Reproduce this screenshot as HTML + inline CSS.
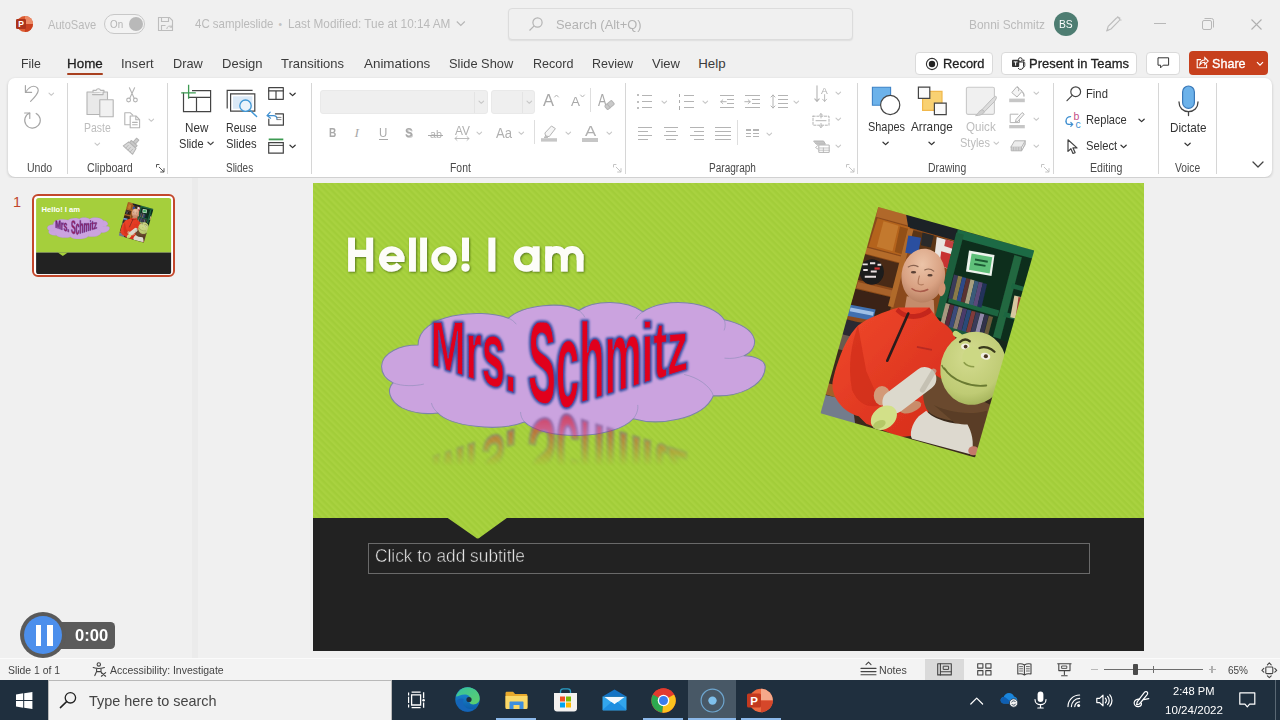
<!DOCTYPE html>
<html>
<head>
<meta charset="utf-8">
<title>PowerPoint</title>
<style>
*{box-sizing:border-box;margin:0;padding:0}
html,body{width:1280px;height:720px;overflow:hidden;background:#f0f0f0;font-family:"Liberation Sans",sans-serif;}
#root{position:relative;width:1280px;height:720px;overflow:hidden;background:#f0f0f0;}
.abs{position:absolute}
svg{position:absolute;overflow:visible}
.t{position:absolute;white-space:nowrap;line-height:1;}
#titlebar{position:absolute;left:0;top:0;width:1280px;height:47px;background:#f0f0f0;}
#tabs{position:absolute;left:0;top:47px;width:1280px;height:32px;background:#f0f0f0;}
#ribbon{position:absolute;left:8px;top:78px;width:1264px;height:99px;background:#fff;border-radius:7px;box-shadow:0 1px 3px rgba(0,0,0,.2);}
.vd{position:absolute;width:1px;background:#dcdcdc;}
#work{position:absolute;left:0;top:178px;width:1280px;height:480px;background:#f0f0f0;}
#leftpane{position:absolute;left:192px;top:178px;width:6px;height:480px;background:#ebebeb;}
#slide{position:absolute;left:313px;top:183px;width:831px;height:468px;background:#a5cd39;overflow:hidden;}
#status{position:absolute;left:0;top:658px;width:1280px;height:22px;background:#f3f3f3;border-top:1px solid #fbfbfb;}
#taskbar{position:absolute;left:0;top:680px;width:1280px;height:40px;background:#1f2f3e;}

</style>
</head>
<body>
<div id="root">
<div id="titlebar"></div>
<svg style="left:14px;top:14px" width="20" height="20" viewBox="0 0 20 20">
 <circle cx="11" cy="10" r="8" fill="#dc5a30"/>
 <path d="M11 2a8 8 0 0 1 8 8h-8z" fill="#ec8a66"/>
 <path d="M11 10h8a8 8 0 0 1-8 8z" fill="#c9401f"/>
 <rect x="2" y="5" width="10" height="10" rx="1.2" fill="#ad331a"/>
 <text x="7" y="13.2" font-family="Liberation Sans" font-weight="bold" font-size="8.5" fill="#fff" text-anchor="middle">P</text>
</svg>
<div class="t" style="left:48.40px;top:18.67px;font-size:12.2px;color:#bababa;transform:scaleX(0.9111);transform-origin:0 0;">AutoSave</div>
<div class="abs" style="left:104px;top:14px;width:41px;height:20px;border:1px solid #c8c8c8;border-radius:10px;background:#f3f3f3"></div>
<div class="t" style="left:109.70px;top:18.77px;font-size:11.5px;color:#b5b5b5;transform:scaleX(0.8539);transform-origin:0 0;">On</div>
<div class="abs" style="left:129.3px;top:16.8px;width:14px;height:14px;border-radius:7px;background:#b9b9b9"></div>
<svg style="left:157px;top:16px" width="17" height="16" viewBox="0 0 17 16" fill="none" stroke="#bdbdbd" stroke-width="1.1">
 <path d="M1.5 1.5h11l3 3v10h-14z"/><path d="M4.5 1.5v4h7v-4"/><path d="M4.5 14.5v-5h4"/><path d="M9.8 13a3 3 0 0 1 5-2.2m.3-2v2.3h-2.3" stroke-width="1"/>
</svg>
<div class="t" style="left:194.50px;top:18.47px;font-size:12.2px;color:#bababa;transform:scaleX(0.9412);transform-origin:0 0;">4C sampleslide</div>
<div class="t" style="left:278.60px;top:20.34px;font-size:10px;color:#c2c2c2;">•</div>
<div class="t" style="left:287.50px;top:18.47px;font-size:12.2px;color:#bababa;transform:scaleX(0.9662);transform-origin:0 0;">Last Modified: Tue at 10:14 AM</div>
<svg style="left:455.5px;top:20px" width="10" height="8" viewBox="0 0 10 8" fill="none" stroke="#b5b5b5" stroke-width="1.1"><path d="M.8 1.5l4 4 4-4"/></svg>
<div class="abs" style="left:508px;top:8px;width:345px;height:32px;border:1px solid #dcdcdc;border-radius:4px;background:#f0f0f0;box-shadow:0 1px 1.5px rgba(0,0,0,.08)"></div>
<svg style="left:528px;top:16px" width="16" height="16" viewBox="0 0 16 16" fill="none" stroke="#b3b3b3" stroke-width="1.2"><circle cx="9.5" cy="6.5" r="4.6"/><path d="M6.2 9.8L1.5 14.5"/></svg>
<div class="t" style="left:556.00px;top:18.00px;font-size:13px;color:#b3b3b3;transform:scaleX(0.9903);transform-origin:0 0;">Search (Alt+Q)</div>
<div class="t" style="left:969.00px;top:18.67px;font-size:12.2px;color:#bababa;transform:scaleX(0.9746);transform-origin:0 0;">Bonni Schmitz</div>
<div class="abs" style="left:1054px;top:12px;width:24.4px;height:24.4px;border-radius:12.2px;background:#4e7d72"></div>
<div class="t" style="left:1059.30px;top:19.11px;font-size:10.5px;color:#fff;transform:scaleX(0.9781);transform-origin:0 0;">BS</div>
<svg style="left:1104px;top:15px" width="19" height="18" viewBox="0 0 19 18" fill="none" stroke="#bdbdbd" stroke-width="1.1">
 <path d="M3 15.5l1.2-4.2L12.5 3a1.9 1.9 0 0 1 2.7 2.7L7 14z"/><path d="M13.5 1.2l1 1.6 1.8.3M16.5 5.5l.8-.8"/><path d="M2.5 16l2-1"/>
</svg>
<div class="abs" style="left:1154px;top:23px;width:12px;height:1px;background:#b8b8b8"></div>
<svg style="left:1202px;top:18px" width="12" height="12" viewBox="0 0 12 12" fill="none" stroke="#b8b8b8" stroke-width="1"><rect x=".5" y="2.5" width="9" height="9" rx="1.5"/><path d="M2.5 .5h7a2 2 0 0 1 2 2v7"/></svg>
<svg style="left:1250.5px;top:18.5px" width="11" height="11" viewBox="0 0 11 11" fill="none" stroke="#b0b0b0" stroke-width="1.1"><path d="M.5 .5l10 10M10.5 .5l-10 10"/></svg>
<div id="tabs"></div>
<div class="t" style="left:21.30px;top:56.74px;font-size:13.3px;color:#3b3b3b;transform:scaleX(0.9286);transform-origin:0 0;">File</div>
<div class="t" style="left:67.00px;top:56.74px;font-size:13.3px;color:#1e1e1e;transform:scaleX(1.0091);transform-origin:0 0;-webkit-text-stroke:.3px #1e1e1e;">Home</div>
<div class="t" style="left:121.20px;top:56.74px;font-size:13.3px;color:#3b3b3b;transform:scaleX(0.9801);transform-origin:0 0;">Insert</div>
<div class="t" style="left:173.20px;top:56.74px;font-size:13.3px;color:#3b3b3b;transform:scaleX(0.9602);transform-origin:0 0;">Draw</div>
<div class="t" style="left:222.00px;top:56.74px;font-size:13.3px;color:#3b3b3b;transform:scaleX(0.9783);transform-origin:0 0;">Design</div>
<div class="t" style="left:281.20px;top:56.74px;font-size:13.3px;color:#3b3b3b;transform:scaleX(0.9760);transform-origin:0 0;">Transitions</div>
<div class="t" style="left:363.70px;top:56.74px;font-size:13.3px;color:#3b3b3b;transform:scaleX(1.0077);transform-origin:0 0;">Animations</div>
<div class="t" style="left:448.80px;top:56.74px;font-size:13.3px;color:#3b3b3b;transform:scaleX(0.9648);transform-origin:0 0;">Slide Show</div>
<div class="t" style="left:532.50px;top:56.74px;font-size:13.3px;color:#3b3b3b;transform:scaleX(0.9446);transform-origin:0 0;">Record</div>
<div class="t" style="left:592.00px;top:56.74px;font-size:13.3px;color:#3b3b3b;transform:scaleX(0.9402);transform-origin:0 0;">Review</div>
<div class="t" style="left:652.00px;top:56.74px;font-size:13.3px;color:#3b3b3b;transform:scaleX(0.9794);transform-origin:0 0;">View</div>
<div class="t" style="left:698.20px;top:56.74px;font-size:13.3px;color:#3b3b3b;">Help</div>
<div class="abs" style="left:67px;top:72.7px;width:36px;height:2.6px;border-radius:1.3px;background:#a8401f"></div>
<div class="abs" style="left:915.4px;top:52px;width:77.2px;height:22.6px;border:1px solid #dadada;border-radius:4px;background:#fff"></div>
<svg style="left:925px;top:56.5px" width="14" height="14" viewBox="0 0 14 14"><circle cx="7" cy="7" r="5.6" fill="none" stroke="#333" stroke-width="1.1"/><circle cx="7" cy="7" r="3.2" fill="#222"/></svg>
<div class="t" style="left:942.50px;top:56.74px;font-size:13.3px;color:#222;transform:scaleX(0.9679);transform-origin:0 0;-webkit-text-stroke:.3px #222;">Record</div>
<div class="abs" style="left:1001.4px;top:52px;width:135.4px;height:22.6px;border:1px solid #dadada;border-radius:4px;background:#fff"></div>
<svg style="left:1011.5px;top:56.5px" width="13" height="13" viewBox="0 0 13 13">
 <circle cx="8.3" cy="2.6" r="1.9" fill="none" stroke="#333" stroke-width="1"/><circle cx="11.6" cy="3.6" r="1.1" fill="#444"/>
 <path d="M6 5h5.5v4.5a3 3 0 0 1-5.5 1.6" fill="none" stroke="#333" stroke-width="1"/><path d="M11.5 5.6h1.3v3.2a1.6 1.6 0 0 1-1.3 1.5" fill="none" stroke="#444" stroke-width=".9"/>
 <rect x="0" y="2.8" width="7.2" height="7.2" rx=".9" fill="#333"/><path d="M1.7 4.9h3.8M3.6 4.9v3.7" stroke="#fff" stroke-width="1"/>
</svg>
<div class="t" style="left:1028.60px;top:56.74px;font-size:13.3px;color:#222;transform:scaleX(0.9755);transform-origin:0 0;-webkit-text-stroke:.3px #222;">Present in Teams</div>
<div class="abs" style="left:1145.8px;top:52px;width:34px;height:22.6px;border:1px solid #dadada;border-radius:4px;background:#fff"></div>
<svg style="left:1156.5px;top:57px" width="13" height="12" viewBox="0 0 13 12" fill="none" stroke="#333" stroke-width="1"><path d="M1 .8h10.6v7.4H6.2L3.6 10.8V8.2H1z"/></svg>
<div class="abs" style="left:1188.6px;top:50.6px;width:79.6px;height:24px;border-radius:4px;background:#c7401d"></div>
<svg style="left:1195.5px;top:56px" width="13" height="13" viewBox="0 0 13 13" fill="none" stroke="#fff" stroke-width="1.1">
 <path d="M5 3.6H1.2v8.2h9.4V8.4"/><path d="M3.8 8.6c.4-3 2.4-4.6 5-4.6V1.6l3.4 3.5-3.4 3.5V6.3c-2.2 0-3.8.7-5 2.3z"/></svg>
<div class="t" style="left:1212.40px;top:56.74px;font-size:13.3px;color:#fff;transform:scaleX(0.9467);transform-origin:0 0;-webkit-text-stroke:.35px #fff;">Share</div>
<svg style="left:1255.5px;top:60.5px" width="8" height="6" viewBox="0 0 8 6" fill="none" stroke="#fff" stroke-width="1.2"><path d="M1 1.2l3 3 3-3"/></svg>
<div id="ribbon"></div>
<svg style="left:24px;top:85px" width="16" height="17" viewBox="0 0 16 17" fill="none" stroke="#a6a6a6" stroke-width="1.15" stroke-linecap="round" stroke-linejoin="round" ><path d="M1.400 .600v6.800h6.200"/><path d="M1.800 7C4 3.500 7 1.200 9.600 1.200c3 0 4.800 2.200 4.600 4.400-.200 3.400-4.200 7.400-7.600 10.800"/></svg>
<svg style="left:48.10px;top:91.50px" width="6.6" height="6" viewBox="0 0 6.6 6" fill="none" stroke="#c6c6c6" stroke-width="1.1" stroke-linecap="round" stroke-linejoin="round"><path d="M1 1.2l2.3 2.0999999999999996 2.3 -2.0999999999999996"/></svg>
<svg style="left:23.5px;top:111.5px" width="17" height="17" viewBox="0 0 17 17" fill="none" stroke="#a6a6a6" stroke-width="1.15" stroke-linecap="round" stroke-linejoin="round" ><path d="M12.140 1.400A7.800 7.800 0 1 1 5.770 1"/><path d="M.600 1h5.170v5.400"/></svg>
<div class="t" style="left:27.00px;top:161.54px;font-size:12px;color:#4a4a4a;transform:scaleX(0.8784);transform-origin:0 0;">Undo</div>
<div class="vd" style="left:67.3px;top:83px;height:91px;background:#d6d6d6"></div>
<svg style="left:85.5px;top:86.5px" width="28" height="31" viewBox="0 0 28 31" fill="none" stroke="#b4b4b4" stroke-width="1.1" stroke-linecap="round" stroke-linejoin="round" ><path d="M1 5h20.5v22.5H1z" fill="#e9e9e9"/><path d="M7 5V3.4h3.2a2.3 2.3 0 0 1 4.4 0H18V5M6.5 7.6h10.6V5" fill="#f4f4f4"/><path d="M13.8 12.8h13.4v17H13.8z" fill="#f1f1f1"/></svg>
<div class="t" style="left:83.80px;top:122.33px;font-size:12.6px;color:#bdbdbd;transform:scaleX(0.8287);transform-origin:0 0;">Paste</div>
<svg style="left:93.60px;top:141.70px" width="6.6" height="6" viewBox="0 0 6.6 6" fill="none" stroke="#c6c6c6" stroke-width="1.1" stroke-linecap="round" stroke-linejoin="round"><path d="M1 1.2l2.3 2.0999999999999996 2.3 -2.0999999999999996"/></svg>
<svg style="left:126px;top:87px" width="12" height="16" viewBox="0 0 12 16" fill="none" stroke="#b4b4b4" stroke-width="1.1" stroke-linecap="round" stroke-linejoin="round" ><path d="M3.4 .8L8.2 11.2M8.6 .8L3.8 11.2"/><circle cx="2.6" cy="13" r="1.9"/><circle cx="9.4" cy="13" r="1.9"/></svg>
<svg style="left:123.5px;top:111.5px" width="17" height="17" viewBox="0 0 17 17" fill="none" stroke="#b4b4b4" stroke-width="1.1" stroke-linecap="round" stroke-linejoin="round" ><path d="M6 12.8H.8V.8h5.6l2.4 2.4"/><path d="M6.2 4h5.8l3.6 3.6v8.2H6.2z" fill="#fff"/><path d="M11.8 4.2v3.6h3.6M8.6 10.4h4.6M8.6 12.8h4.6"/></svg>
<svg style="left:148.20px;top:117.80px" width="6.6" height="6" viewBox="0 0 6.6 6" fill="none" stroke="#c6c6c6" stroke-width="1.1" stroke-linecap="round" stroke-linejoin="round"><path d="M1 1.2l2.3 2.0999999999999996 2.3 -2.0999999999999996"/></svg>
<svg style="left:124px;top:137px" width="17" height="16" viewBox="0 0 17 16" fill="none" stroke="#b4b4b4" stroke-width="1" stroke-linecap="round" stroke-linejoin="round" ><g transform="rotate(42 8.5 8)"><path d="M7 .2h3v5.2H7z" fill="#cfcfcf"/><path d="M4.6 5.4h7.8v2.8H4.6z" fill="#c8c8c8"/><path d="M3.6 8.2h9.8l1.4 6.6H2.2z" fill="#d9d9d9"/><path d="M5.6 11v3.6M8.5 11v3.6M11.4 11v3.6" stroke-width=".8"/></g></svg>
<div class="t" style="left:86.50px;top:161.54px;font-size:12px;color:#4a4a4a;transform:scaleX(0.8917);transform-origin:0 0;">Clipboard</div>
<svg style="left:155.6px;top:163.5px" width="9" height="9" viewBox="0 0 9 9" fill="none" stroke="#555" stroke-width="1" stroke-linecap="round" stroke-linejoin="round" ><path d="M.5 3V.5H3M3.2 3.2l4.6 4.6M8 4.6V8H4.6"/></svg>
<div class="vd" style="left:167.0px;top:83px;height:91px;background:#d6d6d6"></div>
<svg style="left:180px;top:84px" width="32" height="29" viewBox="0 0 32 29"  fill="none" stroke-width="1.2"><path d="M3.5 8.6V27.6H30.6V6.6H12" stroke="#444"/><path d="M8.2 13.4H30.6M16.5 13.4V27.6" stroke="#444"/><path d="M8.6 .8V14.8M1.2 8.8H15.8" stroke="#3d9b52" stroke-width="1.3"/></svg>
<div class="t" style="left:185.40px;top:121.83px;font-size:12.6px;color:#333;transform:scaleX(0.9244);transform-origin:0 0;">New</div>
<div class="t" style="left:178.80px;top:137.73px;font-size:12.6px;color:#333;transform:scaleX(0.8780);transform-origin:0 0;">Slide</div>
<svg style="left:207.30px;top:141.30px" width="7.2" height="6" viewBox="0 0 7.2 6" fill="none" stroke="#444" stroke-width="1.2" stroke-linecap="round" stroke-linejoin="round"><path d="M1 1.2l2.6 2.4 2.6 -2.4"/></svg>
<svg style="left:226px;top:89px" width="32" height="29" viewBox="0 0 32 29"  fill="none" stroke-width="1.2"><path d="M1.2 19.6V1.4H26.6" stroke="#444"/><path d="M4.6 4.9H28.8V22.2H4.6z" stroke="#444" fill="#fff"/><path d="M7 7.3H26.4V19.8H7z" fill="#dbe9f6" stroke="none"/><circle cx="19.5" cy="16.7" r="5.7" stroke="#3f97d6" fill="#eaf3fb" stroke-width="1.3"/><path d="M23.6 20.8L30.6 27.6" stroke="#3f97d6" stroke-width="1.4" stroke-linecap="round"/></svg>
<div class="t" style="left:225.60px;top:121.83px;font-size:12.6px;color:#333;transform:scaleX(0.8401);transform-origin:0 0;">Reuse</div>
<div class="t" style="left:225.60px;top:137.73px;font-size:12.6px;color:#333;transform:scaleX(0.8917);transform-origin:0 0;">Slides</div>
<svg style="left:268px;top:87px" width="16" height="13" viewBox="0 0 16 13" fill="none" stroke="#444" stroke-width="1.2" stroke-linecap="round" stroke-linejoin="round" ><path d="M.7 .7h14.6v11.6H.7z"/><path d="M.7 3.9h14.6M8 3.9v8.4"/></svg>
<svg style="left:289.40px;top:91.50px" width="7.2" height="6" viewBox="0 0 7.2 6" fill="none" stroke="#333" stroke-width="1.25" stroke-linecap="round" stroke-linejoin="round"><path d="M1 1.2l2.6 2.4 2.6 -2.4"/></svg>
<svg style="left:266px;top:111px" width="19" height="15" viewBox="0 0 19 15"  fill="none" stroke-linecap="round" stroke-linejoin="round"><path d="M9.4 2.8H17.4V14.2H2.8V8.2" stroke="#444" stroke-width="1.2"/><path d="M1 4.6L4.2 1.2M1 4.6l3.6 2.6M1.2 4.6h6.2c2.2 0 3.6 1.6 3.6 3.6" stroke="#3f8fd0" stroke-width="1.2"/><path d="M11 6.4h4M11 8.6h4" stroke="#777" stroke-width=".9"/></svg>
<svg style="left:268px;top:138px" width="16" height="16" viewBox="0 0 16 16"  fill="none"><path d="M.7 1.4h14.6" stroke="#3d9b52" stroke-width="1.8"/><path d="M.7 4.6h14.6v10.6H.7z" stroke="#444" stroke-width="1.2"/><path d="M.7 7.4h14.6" stroke="#444" stroke-width="1"/></svg>
<svg style="left:289.40px;top:143.90px" width="7.2" height="6" viewBox="0 0 7.2 6" fill="none" stroke="#333" stroke-width="1.25" stroke-linecap="round" stroke-linejoin="round"><path d="M1 1.2l2.6 2.4 2.6 -2.4"/></svg>
<div class="t" style="left:225.60px;top:161.54px;font-size:12px;color:#4a4a4a;transform:scaleX(0.8292);transform-origin:0 0;">Slides</div>
<div class="vd" style="left:311.0px;top:83px;height:91px;background:#d6d6d6"></div>
<div class="abs" style="left:320.3px;top:90.4px;width:167.5px;height:23.2px;background:#efefef;border:1px solid #e9e9e9;border-radius:3px"></div>
<div class="vd" style="left:474.4px;top:91.5px;height:21.0px;background:#e4e4e4"></div>
<svg style="left:478.30px;top:99.50px" width="6.6" height="6" viewBox="0 0 6.6 6" fill="none" stroke="#c6c6c6" stroke-width="1.1" stroke-linecap="round" stroke-linejoin="round"><path d="M1 1.2l2.3 2.0999999999999996 2.3 -2.0999999999999996"/></svg>
<div class="abs" style="left:491.2px;top:90.4px;width:44.2px;height:23.2px;background:#efefef;border:1px solid #e9e9e9;border-radius:3px"></div>
<div class="vd" style="left:521.6px;top:91.5px;height:21.0px;background:#e4e4e4"></div>
<svg style="left:525.70px;top:99.50px" width="6.6" height="6" viewBox="0 0 6.6 6" fill="none" stroke="#c6c6c6" stroke-width="1.1" stroke-linecap="round" stroke-linejoin="round"><path d="M1 1.2l2.3 2.0999999999999996 2.3 -2.0999999999999996"/></svg>
<div class="t" style="left:543.20px;top:91.97px;font-size:17.4px;color:#a8a8a8;transform:scaleX(0.9478);transform-origin:0 0;">A</div>
<svg style="left:554.4px;top:93.6px" width="5" height="4" viewBox="0 0 5 4" fill="none" stroke="#b4b4b4" stroke-width="1" stroke-linecap="round" stroke-linejoin="round" ><path d="M.6 3L2.5 1l1.9 2"/></svg>
<div class="t" style="left:570.60px;top:95.36px;font-size:13.4px;color:#a8a8a8;transform:scaleX(1.0070);transform-origin:0 0;">A</div>
<svg style="left:580px;top:93.6px" width="5" height="4" viewBox="0 0 5 4" fill="none" stroke="#b4b4b4" stroke-width="1" stroke-linecap="round" stroke-linejoin="round" ><path d="M.6 1L2.5 3l1.9-2"/></svg>
<div class="vd" style="left:590.2px;top:88px;height:24px;background:#dedede"></div>
<div class="t" style="left:597.80px;top:91.97px;font-size:17.4px;color:#a8a8a8;transform:scaleX(0.7410);transform-origin:0 0;">A</div>
<svg style="left:603.5px;top:100px" width="11" height="10" viewBox="0 0 11 10" fill="none" stroke="#b4b4b4" stroke-width="1" stroke-linecap="round" stroke-linejoin="round" ><g transform="rotate(-40 5.5 5)"><rect x="1" y="2.6" width="9" height="5" rx="1" fill="#c9c9c9"/><path d="M4.4 2.6v5"/></g></svg>
<div class="t" style="left:328.70px;top:126.43px;font-size:13.2px;color:#a9a9a9;font-weight:bold;transform:scaleX(0.7658);transform-origin:0 0;">B</div>
<div class="t" style="left:354.5px;top:126px;font-size:13.4px;font-family:'Liberation Serif',serif;font-style:italic;color:#a9a9a9">I</div>
<div class="t" style="left:379.40px;top:126.53px;font-size:12.6px;color:#a9a9a9;transform:scaleX(0.9122);transform-origin:0 0;">U</div>
<div class="abs" style="left:378.6px;top:139.2px;width:9.8px;height:1px;background:#a9a9a9"></div>
<div class="t" style="left:405.30px;top:126.29px;font-size:13.6px;color:#a9a9a9;font-weight:bold;transform:scaleX(0.8488);transform-origin:0 0;text-shadow:.8px .8px 0 #d0d0d0;">S</div>
<div class="t" style="left:429.80px;top:128.55px;font-size:11.4px;color:#b0b0b0;transform:scaleX(0.9463);transform-origin:0 0;">ab</div>
<div class="abs" style="left:428.2px;top:134.8px;width:15.2px;height:1px;background:#a9a9a9"></div>
<div class="t" style="left:454.60px;top:124.70px;font-size:12.4px;color:#b0b0b0;transform:scaleX(0.9602);transform-origin:0 0;">AV</div>
<svg style="left:454px;top:136px" width="16" height="5" viewBox="0 0 16 5" fill="none" stroke="#b4b4b4" stroke-width="0.9" stroke-linecap="round" stroke-linejoin="round" ><path d="M1 2.5h14M3 .6L1 2.5l2 1.9M13 .6l2 1.9-2 1.9"/></svg>
<svg style="left:476.00px;top:131.20px" width="6.6" height="6" viewBox="0 0 6.6 6" fill="none" stroke="#c6c6c6" stroke-width="1.1" stroke-linecap="round" stroke-linejoin="round"><path d="M1 1.2l2.3 2.0999999999999996 2.3 -2.0999999999999996"/></svg>
<div class="t" style="left:496.40px;top:127.32px;font-size:13.8px;color:#b0b0b0;transform:scaleX(0.9479);transform-origin:0 0;">Aa</div>
<svg style="left:518.00px;top:131.20px" width="6.6" height="6" viewBox="0 0 6.6 6" fill="none" stroke="#c6c6c6" stroke-width="1.1" stroke-linecap="round" stroke-linejoin="round"><path d="M1 1.2l2.3 2.0999999999999996 2.3 -2.0999999999999996"/></svg>
<div class="vd" style="left:534.2px;top:120px;height:24px;background:#dedede"></div>
<svg style="left:541px;top:125px" width="17" height="17" viewBox="0 0 17 17" fill="none" stroke="#b4b4b4" stroke-width="1" stroke-linecap="round" stroke-linejoin="round" ><path d="M10.8 1.2l3.6 2.4-6.2 8-3.6-.6-.6-2.6z" fill="#f6f6f6"/><path d="M4.6 11l-1.4 1.4h3.2z" fill="#cfcfcf"/><rect x="0" y="13.2" width="16" height="3.4" fill="#c6c6c6" stroke="none"/></svg>
<svg style="left:565.10px;top:131.20px" width="6.6" height="6" viewBox="0 0 6.6 6" fill="none" stroke="#c6c6c6" stroke-width="1.1" stroke-linecap="round" stroke-linejoin="round"><path d="M1 1.2l2.3 2.0999999999999996 2.3 -2.0999999999999996"/></svg>
<div class="t" style="left:584.70px;top:124.21px;font-size:14.4px;color:#b0b0b0;transform:scaleX(1.1661);transform-origin:0 0;">A</div>
<div class="abs" style="left:581.8px;top:138.2px;width:16.2px;height:3.4px;background:#c6c6c6"></div>
<svg style="left:605.90px;top:131.20px" width="6.6" height="6" viewBox="0 0 6.6 6" fill="none" stroke="#c6c6c6" stroke-width="1.1" stroke-linecap="round" stroke-linejoin="round"><path d="M1 1.2l2.3 2.0999999999999996 2.3 -2.0999999999999996"/></svg>
<div class="t" style="left:449.60px;top:161.54px;font-size:12px;color:#4a4a4a;transform:scaleX(0.8662);transform-origin:0 0;">Font</div>
<svg style="left:613px;top:163.5px" width="9" height="9" viewBox="0 0 9 9" fill="none" stroke="#c4c4c4" stroke-width="1" stroke-linecap="round" stroke-linejoin="round" ><path d="M.5 3V.5H3M3.2 3.2l4.6 4.6M8 4.6V8H4.6"/></svg>
<div class="vd" style="left:624.6px;top:83px;height:91px;background:#d6d6d6"></div>
<div class="abs" style="left:641.8px;top:94.85px;width:10.7px;height:1.1px;background:#b4b4b4"></div><div class="abs" style="left:641.8px;top:101.05px;width:10.7px;height:1.1px;background:#b4b4b4"></div><div class="abs" style="left:641.8px;top:107.25px;width:10.7px;height:1.1px;background:#b4b4b4"></div>
<div class="abs" style="left:636.6px;top:94.3px;width:2.2px;height:2.2px;border-radius:1.1px;background:#a8a8a8"></div><div class="abs" style="left:636.6px;top:100.5px;width:2.2px;height:2.2px;border-radius:1.1px;background:#a8a8a8"></div><div class="abs" style="left:636.6px;top:106.7px;width:2.2px;height:2.2px;border-radius:1.1px;background:#a8a8a8"></div>
<svg style="left:661.00px;top:99.50px" width="6.6" height="6" viewBox="0 0 6.6 6" fill="none" stroke="#c6c6c6" stroke-width="1.1" stroke-linecap="round" stroke-linejoin="round"><path d="M1 1.2l2.3 2.0999999999999996 2.3 -2.0999999999999996"/></svg>
<div class="abs" style="left:683.6px;top:94.85px;width:10.0px;height:1.1px;background:#b4b4b4"></div><div class="abs" style="left:683.6px;top:101.05px;width:10.0px;height:1.1px;background:#b4b4b4"></div><div class="abs" style="left:683.6px;top:107.25px;width:10.0px;height:1.1px;background:#b4b4b4"></div>
<div class="abs" style="left:679px;top:93.5px;width:1.1px;height:3.8px;background:#ababab"></div>
<div class="abs" style="left:679px;top:99.7px;width:1.1px;height:3.8px;background:#ababab"></div>
<div class="abs" style="left:679px;top:105.9px;width:1.1px;height:3.8px;background:#ababab"></div>
<svg style="left:701.70px;top:99.50px" width="6.6" height="6" viewBox="0 0 6.6 6" fill="none" stroke="#c6c6c6" stroke-width="1.1" stroke-linecap="round" stroke-linejoin="round"><path d="M1 1.2l2.3 2.0999999999999996 2.3 -2.0999999999999996"/></svg>
<div class="abs" style="left:720.0px;top:94.85px;width:14.4px;height:1.1px;background:#b4b4b4"></div><div class="abs" style="left:720.0px;top:107.25px;width:14.4px;height:1.1px;background:#b4b4b4"></div>
<div class="abs" style="left:727.0px;top:99.05px;width:7.4px;height:1.1px;background:#b4b4b4"></div><div class="abs" style="left:727.0px;top:103.15px;width:7.4px;height:1.1px;background:#b4b4b4"></div>
<svg style="left:719.5px;top:99px" width="7" height="6" viewBox="0 0 7 6" fill="none" stroke="#b4b4b4" stroke-width="1" stroke-linecap="round" stroke-linejoin="round" ><path d="M.8 2.7h5.4M2.8 .8L.8 2.7l2 1.9"/></svg>
<div class="abs" style="left:744.6px;top:94.85px;width:15.4px;height:1.1px;background:#b4b4b4"></div><div class="abs" style="left:744.6px;top:107.25px;width:15.4px;height:1.1px;background:#b4b4b4"></div>
<div class="abs" style="left:752.4px;top:99.05px;width:7.6px;height:1.1px;background:#b4b4b4"></div><div class="abs" style="left:752.4px;top:103.15px;width:7.6px;height:1.1px;background:#b4b4b4"></div>
<svg style="left:744.4px;top:99px" width="7" height="6" viewBox="0 0 7 6" fill="none" stroke="#b4b4b4" stroke-width="1" stroke-linecap="round" stroke-linejoin="round" ><path d="M.8 2.7h5.4M4.2 .8l2 1.9-2 1.9"/></svg>
<div class="abs" style="left:778.0px;top:94.85px;width:10.0px;height:1.1px;background:#b4b4b4"></div><div class="abs" style="left:778.0px;top:98.95px;width:10.0px;height:1.1px;background:#b4b4b4"></div><div class="abs" style="left:778.0px;top:103.05px;width:10.0px;height:1.1px;background:#b4b4b4"></div><div class="abs" style="left:778.0px;top:107.25px;width:10.0px;height:1.1px;background:#b4b4b4"></div>
<svg style="left:770.4px;top:94px" width="6" height="15" viewBox="0 0 6 15" fill="none" stroke="#b4b4b4" stroke-width="1" stroke-linecap="round" stroke-linejoin="round" ><path d="M3 1v13M1 3l2-2 2 2M1 12l2 2 2-2"/></svg>
<svg style="left:792.70px;top:99.50px" width="6.6" height="6" viewBox="0 0 6.6 6" fill="none" stroke="#c6c6c6" stroke-width="1.1" stroke-linecap="round" stroke-linejoin="round"><path d="M1 1.2l2.3 2.0999999999999996 2.3 -2.0999999999999996"/></svg>
<svg style="left:814px;top:85px" width="14" height="18" viewBox="0 0 14 18" fill="none" stroke="#b4b4b4" stroke-width="1.1" stroke-linecap="round" stroke-linejoin="round" ><path d="M3 .8v15.6M.8 13.8L3 16.4l2.2-2.6"/><path d="M10.6 9.6v6.8M8.6 14.2l2 2.2 2-2.2" stroke-width=".9"/></svg>
<div class="t" style="left:820.60px;top:85.64px;font-size:9.4px;color:#b0b0b0;transform:scaleX(1.0846);transform-origin:0 0;">A</div>
<svg style="left:834.70px;top:91.10px" width="6.6" height="6" viewBox="0 0 6.6 6" fill="none" stroke="#c6c6c6" stroke-width="1.1" stroke-linecap="round" stroke-linejoin="round"><path d="M1 1.2l2.3 2.0999999999999996 2.3 -2.0999999999999996"/></svg>
<svg style="left:812px;top:112.5px" width="18" height="15" viewBox="0 0 18 15" fill="none" stroke="#b4b4b4" stroke-width="1" stroke-linecap="round" stroke-linejoin="round" ><path d="M1 3.2h16v9H1z" stroke-dasharray="2.2 1.6"/><path d="M4 7.7h10" /><path d="M9 .6v4.4M7.4 2.2L9 .6l1.6 1.6M9 14.6v-4.2M7.4 13l1.6 1.6 1.6-1.6" stroke-width=".9"/></svg>
<svg style="left:834.70px;top:116.90px" width="6.6" height="6" viewBox="0 0 6.6 6" fill="none" stroke="#c6c6c6" stroke-width="1.1" stroke-linecap="round" stroke-linejoin="round"><path d="M1 1.2l2.3 2.0999999999999996 2.3 -2.0999999999999996"/></svg>
<svg style="left:813px;top:139.5px" width="17" height="13" viewBox="0 0 17 13" fill="none" stroke="#b4b4b4" stroke-width="1" stroke-linecap="round" stroke-linejoin="round" ><path d="M1 1h9.6l1.8 3.2H3.6z" fill="#c4c4c4"/><path d="M6.2 5h10v7.4h-10z" fill="#fff"/><path d="M6.2 8h10M6.2 10.2h10M10.4 8v4.4" stroke-width=".8"/><path d="M4.8 5.4L2.6 7.6l2.2 1.4" stroke-width=".9"/></svg>
<svg style="left:834.70px;top:143.50px" width="6.6" height="6" viewBox="0 0 6.6 6" fill="none" stroke="#c6c6c6" stroke-width="1.1" stroke-linecap="round" stroke-linejoin="round"><path d="M1 1.2l2.3 2.0999999999999996 2.3 -2.0999999999999996"/></svg>
<div class="abs" style="left:637.5px;top:126.75px;width:14.7px;height:1.1px;background:#b4b4b4"></div><div class="abs" style="left:637.5px;top:130.95px;width:10.0px;height:1.1px;background:#b4b4b4"></div><div class="abs" style="left:637.5px;top:135.05px;width:14.7px;height:1.1px;background:#b4b4b4"></div><div class="abs" style="left:637.5px;top:139.15px;width:10.0px;height:1.1px;background:#b4b4b4"></div>
<div class="abs" style="left:663.8px;top:126.75px;width:14.6px;height:1.1px;background:#b4b4b4"></div><div class="abs" style="left:666.1px;top:130.95px;width:10.0px;height:1.1px;background:#b4b4b4"></div><div class="abs" style="left:663.8px;top:135.05px;width:14.6px;height:1.1px;background:#b4b4b4"></div><div class="abs" style="left:666.1px;top:139.15px;width:10.0px;height:1.1px;background:#b4b4b4"></div>
<div class="abs" style="left:689.6px;top:126.75px;width:14.6px;height:1.1px;background:#b4b4b4"></div><div class="abs" style="left:694.2px;top:130.95px;width:10.0px;height:1.1px;background:#b4b4b4"></div><div class="abs" style="left:689.6px;top:135.05px;width:14.6px;height:1.1px;background:#b4b4b4"></div><div class="abs" style="left:694.2px;top:139.15px;width:10.0px;height:1.1px;background:#b4b4b4"></div>
<div class="abs" style="left:715.2px;top:126.75px;width:15.8px;height:1.1px;background:#b4b4b4"></div><div class="abs" style="left:715.2px;top:130.95px;width:15.8px;height:1.1px;background:#b4b4b4"></div><div class="abs" style="left:715.2px;top:135.05px;width:15.8px;height:1.1px;background:#b4b4b4"></div><div class="abs" style="left:715.2px;top:139.15px;width:15.8px;height:1.1px;background:#b4b4b4"></div>
<div class="vd" style="left:737.3px;top:120px;height:24.599999999999994px;background:#dedede"></div>
<div class="abs" style="left:746.0px;top:129.45px;width:5.4px;height:1.1px;background:#b4b4b4"></div><div class="abs" style="left:746.0px;top:132.75px;width:5.4px;height:1.1px;background:#b4b4b4"></div><div class="abs" style="left:746.0px;top:136.05px;width:5.4px;height:1.1px;background:#b4b4b4"></div>
<div class="abs" style="left:753.4px;top:129.45px;width:5.4px;height:1.1px;background:#b4b4b4"></div><div class="abs" style="left:753.4px;top:132.75px;width:5.4px;height:1.1px;background:#b4b4b4"></div><div class="abs" style="left:753.4px;top:136.05px;width:5.4px;height:1.1px;background:#b4b4b4"></div>
<svg style="left:766.00px;top:131.90px" width="6.6" height="6" viewBox="0 0 6.6 6" fill="none" stroke="#c6c6c6" stroke-width="1.1" stroke-linecap="round" stroke-linejoin="round"><path d="M1 1.2l2.3 2.0999999999999996 2.3 -2.0999999999999996"/></svg>
<div class="t" style="left:709.30px;top:161.54px;font-size:12px;color:#4a4a4a;transform:scaleX(0.8369);transform-origin:0 0;">Paragraph</div>
<svg style="left:846px;top:163.5px" width="9" height="9" viewBox="0 0 9 9" fill="none" stroke="#c4c4c4" stroke-width="1" stroke-linecap="round" stroke-linejoin="round" ><path d="M.5 3V.5H3M3.2 3.2l4.6 4.6M8 4.6V8H4.6"/></svg>
<div class="vd" style="left:856.6px;top:83px;height:91px;background:#d6d6d6"></div>
<svg style="left:871px;top:86px" width="30" height="30" viewBox="0 0 30 30"  ><path d="M1.4 1.2h18.2v18H1.4z" fill="#6cb2ea" stroke="#3d82c6" stroke-width="1.1"/><circle cx="19.2" cy="19" r="9.6" fill="#fff" stroke="#444" stroke-width="1.2"/></svg>
<div class="t" style="left:867.50px;top:121.33px;font-size:12.6px;color:#333;transform:scaleX(0.8658);transform-origin:0 0;">Shapes</div>
<svg style="left:881.80px;top:141.00px" width="7.2" height="6" viewBox="0 0 7.2 6" fill="none" stroke="#333" stroke-width="1.25" stroke-linecap="round" stroke-linejoin="round"><path d="M1 1.2l2.6 2.4 2.6 -2.4"/></svg>
<svg style="left:917px;top:86px" width="31" height="30" viewBox="0 0 31 30"  ><path d="M5.6 5.4h19.4v19H5.6z" fill="#f9d172" stroke="#f1b84c" stroke-width="1.2"/><path d="M1.4 1.2h11.4v11.2H1.4z" fill="#fafafa" stroke="#444" stroke-width="1.2"/><path d="M17.4 17.2h11.8v11.4H17.4z" fill="#fafafa" stroke="#444" stroke-width="1.2"/></svg>
<div class="t" style="left:911.30px;top:121.33px;font-size:12.6px;color:#333;transform:scaleX(0.9303);transform-origin:0 0;">Arrange</div>
<svg style="left:928.40px;top:141.00px" width="7.2" height="6" viewBox="0 0 7.2 6" fill="none" stroke="#333" stroke-width="1.25" stroke-linecap="round" stroke-linejoin="round"><path d="M1 1.2l2.6 2.4 2.6 -2.4"/></svg>
<svg style="left:965px;top:86px" width="33" height="32" viewBox="0 0 33 32"  ><rect x="1.4" y="1.2" width="28" height="27.2" rx="1.6" fill="#f0f0f0" stroke="#c9c9c9" stroke-width="1.1"/><path d="M31.2 10.6c.8 1-.4 3-2 5.2l-9.6 9.8-2.6-2 9.8-10.4c1.8-1.8 3.6-3.4 4.4-2.6z" fill="#dcdcdc" stroke="#bdbdbd" stroke-width="1"/><path d="M17 23.6l2.6 2c-1.2 2.8-4.600 4-9 4 2.400-1 2.800-4.800 6.400-6z" fill="#cfcfcf" stroke="#bdbdbd" stroke-width="1"/></svg>
<div class="t" style="left:965.50px;top:121.33px;font-size:12.6px;color:#bdbdbd;transform:scaleX(0.9221);transform-origin:0 0;">Quick</div>
<div class="t" style="left:960.00px;top:137.33px;font-size:12.6px;color:#bdbdbd;transform:scaleX(0.8743);transform-origin:0 0;">Styles</div>
<svg style="left:992.90px;top:141.30px" width="6.6" height="6" viewBox="0 0 6.6 6" fill="none" stroke="#c6c6c6" stroke-width="1.1" stroke-linecap="round" stroke-linejoin="round"><path d="M1 1.2l2.3 2.0999999999999996 2.3 -2.0999999999999996"/></svg>
<svg style="left:1009px;top:85.5px" width="17" height="17" viewBox="0 0 17 17" fill="none" stroke="#b4b4b4" stroke-width="1" stroke-linecap="round" stroke-linejoin="round" ><path d="M7.4 1.2L2.800 6.600l5.200 4.400 5-5.600z" fill="#f4f4f4"/><path d="M8.600 .6c1 .4 1.400 2.200 1 4.200"/><path d="M13.600 6.200c1.200 1.400 1.600 2.600 1.400 3.800" stroke-width="1.300"/><rect x=".2" y="12.600" width="15.600" height="3.600" fill="#c6c6c6" stroke="none"/></svg>
<svg style="left:1032.50px;top:91.30px" width="6.6" height="6" viewBox="0 0 6.6 6" fill="none" stroke="#c6c6c6" stroke-width="1.1" stroke-linecap="round" stroke-linejoin="round"><path d="M1 1.2l2.3 2.0999999999999996 2.3 -2.0999999999999996"/></svg>
<svg style="left:1009px;top:111.5px" width="17" height="17" viewBox="0 0 17 17" fill="none" stroke="#b4b4b4" stroke-width="1" stroke-linecap="round" stroke-linejoin="round" ><path d="M9 2.200H1.200v8.400h9.200V7.800" /><path d="M13.400 .8l1.800 1.400-6.400 7.200-2.400.8.600-2.400z" fill="#f4f4f4"/><rect x=".2" y="13" width="15.600" height="3.300" fill="#c6c6c6" stroke="none"/></svg>
<svg style="left:1032.50px;top:116.90px" width="6.6" height="6" viewBox="0 0 6.6 6" fill="none" stroke="#c6c6c6" stroke-width="1.1" stroke-linecap="round" stroke-linejoin="round"><path d="M1 1.2l2.3 2.0999999999999996 2.3 -2.0999999999999996"/></svg>
<svg style="left:1009.5px;top:139.5px" width="16" height="12" viewBox="0 0 16 12" fill="none" stroke="#b4b4b4" stroke-width="1" stroke-linecap="round" stroke-linejoin="round" ><path d="M5 .8h10.200l-3.600 6.400H1.200z" fill="#ececec"/><path d="M1.200 7.200v3.600h10.400V7.200M11.600 10.800l3.600-6.200V.8" fill="#cfcfcf"/><path d="M3.500 7.400v3.200M6 7.400v3.200M8.600 7.400v3.200" stroke-width=".7"/></svg>
<svg style="left:1032.50px;top:143.50px" width="6.6" height="6" viewBox="0 0 6.6 6" fill="none" stroke="#c6c6c6" stroke-width="1.1" stroke-linecap="round" stroke-linejoin="round"><path d="M1 1.2l2.3 2.0999999999999996 2.3 -2.0999999999999996"/></svg>
<div class="t" style="left:928.00px;top:161.54px;font-size:12px;color:#4a4a4a;transform:scaleX(0.8679);transform-origin:0 0;">Drawing</div>
<svg style="left:1041.2px;top:163.5px" width="9" height="9" viewBox="0 0 9 9" fill="none" stroke="#c4c4c4" stroke-width="1" stroke-linecap="round" stroke-linejoin="round" ><path d="M.5 3V.5H3M3.2 3.2l4.6 4.6M8 4.6V8H4.6"/></svg>
<div class="vd" style="left:1053.0px;top:83px;height:91px;background:#d6d6d6"></div>
<svg style="left:1065.5px;top:86px" width="16" height="16" viewBox="0 0 16 16" fill="none" stroke="#444" stroke-width="1.2" stroke-linecap="round" stroke-linejoin="round" ><circle cx="9.700" cy="5.700" r="4.900"/><path d="M6.200 9.300L1 14.700"/></svg>
<div class="t" style="left:1085.60px;top:87.83px;font-size:12.6px;color:#333;transform:scaleX(0.8935);transform-origin:0 0;">Find</div>
<svg style="left:1064.5px;top:111.5px" width="17" height="17" viewBox="0 0 17 17"  fill="none" stroke-linecap="round" stroke-linejoin="round"><path d="M1 9.200c0-3 2-4.600 4.600-4.600M3.600 12.400H7.600M5.800 10.400l2 2-2 2" stroke="#3f8fd0" stroke-width="1.200"/><path d="M1 9.200c0 1.800 1 3.200 2.600 3.200" stroke="#3f8fd0" stroke-width="1.200"/></svg>
<div class="t" style="left:1073.40px;top:111.11px;font-size:10.5px;color:#c44f86;">b</div>
<div class="t" style="left:1075.40px;top:118.71px;font-size:10.5px;color:#3f8fd0;">c</div>
<div class="t" style="left:1085.60px;top:113.93px;font-size:12.6px;color:#333;transform:scaleX(0.8826);transform-origin:0 0;">Replace</div>
<svg style="left:1138.40px;top:117.90px" width="7.2" height="6" viewBox="0 0 7.2 6" fill="none" stroke="#333" stroke-width="1.25" stroke-linecap="round" stroke-linejoin="round"><path d="M1 1.2l2.6 2.4 2.6 -2.4"/></svg>
<svg style="left:1066.5px;top:139px" width="12" height="16" viewBox="0 0 12 16" fill="none" stroke="#444" stroke-width="1.2" stroke-linecap="round" stroke-linejoin="round" ><path d="M1 .8v11.600l2.900-2.700 2.100 4.800 2.100-.9-2.100-4.700h4z" fill="#fff"/></svg>
<div class="t" style="left:1085.60px;top:139.73px;font-size:12.6px;color:#333;transform:scaleX(0.8909);transform-origin:0 0;">Select</div>
<svg style="left:1120.40px;top:143.70px" width="7.2" height="6" viewBox="0 0 7.2 6" fill="none" stroke="#333" stroke-width="1.25" stroke-linecap="round" stroke-linejoin="round"><path d="M1 1.2l2.6 2.4 2.6 -2.4"/></svg>
<div class="t" style="left:1089.50px;top:161.54px;font-size:12px;color:#4a4a4a;transform:scaleX(0.8830);transform-origin:0 0;">Editing</div>
<div class="vd" style="left:1158.3px;top:83px;height:91px;background:#d6d6d6"></div>
<svg style="left:1177.5px;top:84.5px" width="21" height="32" viewBox="0 0 21 32"  ><rect x="4.600" y="1" width="11.800" height="22.400" rx="5.900" fill="#6cb2ea" stroke="#3b79b8" stroke-width="1.200"/><path d="M1 17c0 5.800 4 9.600 9.500 9.600S20 22.800 20 17M10.500 26.600V30.600" fill="none" stroke="#444" stroke-width="1.300" stroke-linecap="round"/></svg>
<div class="t" style="left:1169.50px;top:121.93px;font-size:12.6px;color:#333;transform:scaleX(0.9308);transform-origin:0 0;">Dictate</div>
<svg style="left:1183.90px;top:141.80px" width="7.2" height="6" viewBox="0 0 7.2 6" fill="none" stroke="#333" stroke-width="1.25" stroke-linecap="round" stroke-linejoin="round"><path d="M1 1.2l2.6 2.4 2.6 -2.4"/></svg>
<div class="t" style="left:1174.90px;top:161.54px;font-size:12px;color:#4a4a4a;transform:scaleX(0.8550);transform-origin:0 0;">Voice</div>
<div class="vd" style="left:1216.2px;top:83px;height:91px;background:#d6d6d6"></div>
<svg style="left:1251.5px;top:161px" width="12" height="7" viewBox="0 0 12 7" fill="none" stroke="#444" stroke-width="1.3" stroke-linecap="round" stroke-linejoin="round" ><path d="M1 1l5 5 5-5"/></svg>
<div id="work"></div>
<div id="leftpane"></div>
<div class="t" style="left:13.00px;top:195.33px;font-size:14.5px;color:#c0442a;">1</div>
<div class="abs" style="left:32px;top:194px;width:142.6px;height:83px;border:2.400px solid #c3482c;border-radius:6px;background:#fff"></div>
<svg style="left:35.600px;top:197.500px" width="135.400" height="76.200" viewBox="313 183 831 468">
<defs><clipPath id="tc"><rect x="313" y="183" width="831" height="468" rx="16"/></clipPath></defs>
<g clip-path="url(#tc)">
<rect x="313" y="183" width="831" height="335.500" fill="#a5cf3c"/>
<rect x="313" y="518" width="831" height="133" fill="#222"/>
<path d="M447 517.500h60.500L477.500 540z" fill="#a5cf3c"/>
<text x="347" y="271.300" font-family="Liberation Sans" font-weight="bold" font-size="46" fill="#fff" textLength="236" lengthAdjust="spacingAndGlyphs">Hello! I am</text>
<use href="#cl" transform="translate(370,290) scale(.3203)"/>
<use href="#wa" fill="#a0205a" stroke="#5a3a9a" stroke-width="3"/>
<use href="#ph" transform="translate(810,195) scale(.375)"/>
</g></svg>
<div id="slide"></div>
<svg style="left:313px;top:183px" width="831" height="468" viewBox="0 0 831 468">
<defs><pattern id="stripe" width="4.6" height="4.6" patternUnits="userSpaceOnUse" patternTransform="rotate(-45)">
<rect width="4.6" height="4.6" fill="#a2cd39"/><rect width="2.3" height="4.6" fill="#a9d240"/></pattern></defs>
<rect width="831" height="335" fill="url(#stripe)"/>
<rect y="335" width="831" height="133" fill="#222222"/>
<path d="M134 334.5h60.500L167.200 354.200a3.500 3.500 0 0 1-4.900 0z" fill="url(#stripe)"/>
</svg>
<svg style="left:0;top:0" width="1280" height="720" viewBox="0 0 1280 720"><defs><filter id="ts" x="-5%" y="-20%" width="110%" height="150%"><feDropShadow dx="0.9" dy="0.9" stdDeviation="0.8" flood-color="#3a5a0a" flood-opacity=".8"/></filter></defs><g fill="#fdfdf8" filter="url(#ts)"><rect x="348.10" y="237.60" width="6.9" height="34.00"/><rect x="366.20" y="237.60" width="6.9" height="34.00"/><rect x="350" y="249.8" width="20" height="7.2"/><path d="M399.23 264.83A9.55 9.55 0 1 1 401.25 259.15" fill="none" stroke="#fdfdf8" stroke-width="6.4"/><rect x="382.15" y="256.2" width="22.30" height="5.8"/><rect x="409.00" y="237.60" width="6.9" height="34.00"/><rect x="420.10" y="237.60" width="6.9" height="34.00"/><circle cx="444" cy="258.95" r="9.55" fill="none" stroke="#fdfdf8" stroke-width="6.4"/><rect x="462.00" y="237.60" width="7" height="23.60"/><circle cx="465.5" cy="267.6" r="4.1"/><rect x="488.40" y="237.60" width="6.9" height="34.00"/><circle cx="526.4" cy="258.95" r="9.55" fill="none" stroke="#fdfdf8" stroke-width="6.4"/><rect x="532.70" y="246.30" width="6.9" height="25.30"/><rect x="545.20" y="246.30" width="6.8" height="25.30"/><rect x="560.90" y="254.00" width="6.8" height="17.60"/><rect x="576.70" y="254.00" width="6.8" height="17.60"/><path d="M548.6 260.35V257.35a7.85 7.85 0 0 1 15.7 0v3M564.3 260.35V257.35a7.85 7.85 0 0 1 15.7 0v3" fill="none" stroke="#fdfdf8" stroke-width="6.8"/></g></svg>
<svg style="left:370px;top:290px" width="410" height="180" viewBox="0 0 1280 562">
<g id="cl"><path d="M150 172 C95 172 38 195 36 238 C36 262 52 280 72 290 C52 310 58 345 100 368 C135 385 180 388 212 384 C250 425 400 445 482 412 C540 470 760 470 822 402 C900 425 1040 405 1072 330 C1150 335 1232 300 1234 240 C1234 220 1200 205 1168 205 C1215 185 1225 120 1106 93 C1070 35 920 20 852 68 C800 30 700 30 652 64 C600 35 480 45 432 88 C340 55 150 75 150 172Z" fill="#cba3df" stroke="#7c84a8" stroke-width="3.200" stroke-linejoin="round"/>
<path d="M72 290c30 12 70 10 95 4M212 384c-10-8-18-20-20-30M482 412c-8-10-12-20-12-30M822 402c10-12 16-28 14-42M1072 330c-8-30-50-58-90-66M1168 205c-20 8-40 10-60 8M1106 93c4 10 4 22 0 32M852 68c-10 6-18 14-22 22M652 64c8 6 14 12 18 20M432 88c10 4 18 10 24 18" fill="none" stroke="#8a8cb5" stroke-width="2.400" stroke-linecap="round" opacity=".75"/></g>
</svg>
<svg style="left:0;top:0" width="1280" height="720" viewBox="0 0 1280 720">
<defs>
<filter id="wb" x="-5%" y="-10%" width="110%" height="120%"><feGaussianBlur stdDeviation=".9"/></filter>
<filter id="rb" x="-5%" y="-10%" width="110%" height="130%"><feGaussianBlur stdDeviation="1.300"/></filter>
<linearGradient id="rg" x1="0" y1="411" x2="0" y2="466" gradientUnits="userSpaceOnUse"><stop offset="0" stop-color="#fff" stop-opacity=".8"/><stop offset=".5" stop-color="#fff" stop-opacity=".4"/><stop offset="1" stop-color="#fff" stop-opacity="0"/></linearGradient>
<mask id="rm" maskUnits="userSpaceOnUse" x="400" y="405" width="320" height="70"><rect x="400" y="405" width="320" height="70" fill="url(#rg)"/></mask>
<path id="wa" d="M457.3 373.5L457.3 372.1L457.3 370.6L457.3 369.1L457.3 367.6L457.3 366.2L457.3 364.7L457.3 363.2L457.3 361.7L457.3 360.3L457.3 358.8L457.3 357.3L457.3 355.8L457.3 354.4L457.3 352.9L457.3 351.4L457.3 349.9L457.3 348.4L457.3 347.0L457.3 345.5L457.3 344.0L457.3 342.5L457.3 342.2L457.3 341.8L457.3 341.5L457.3 341.1L457.3 340.8L457.3 340.4L457.3 339.9L457.4 339.0L457.4 337.7L457.4 336.0L457.5 333.9L457.5 331.4L457.1 334.5L456.7 337.2L456.3 339.6L455.9 341.6L455.6 343.3L455.4 344.7L455.1 346.1L454.9 347.5L454.6 348.8L454.4 350.2L454.1 351.5L453.8 352.9L453.6 354.2L453.3 355.5L453.1 356.9L452.8 358.2L452.6 359.5L452.3 360.8L452.0 362.1L451.8 363.4L451.5 364.7L451.3 366.0L451.0 367.3L450.7 368.6L450.5 369.9L450.2 371.1L449.4 370.9L448.5 370.6L447.7 370.3L446.8 370.0L445.9 369.7L445.7 368.3L445.4 366.9L445.2 365.5L444.9 364.1L444.7 362.7L444.4 361.3L444.1 360.0L443.9 358.6L443.6 357.2L443.4 355.9L443.1 354.5L442.8 353.2L442.6 351.8L442.3 350.5L442.1 349.1L441.8 347.8L441.5 346.5L441.3 345.2L441.0 343.9L440.8 342.5L440.5 341.2L440.3 339.8L440.0 338.4L439.8 337.0L439.6 335.7L439.3 334.3L439.1 333.0L438.8 331.6L438.6 330.3L438.7 332.6L438.7 334.7L438.8 336.4L438.8 337.9L438.8 339.1L438.8 340.1L438.8 341.4L438.8 342.7L438.8 344.0L438.8 345.3L438.8 346.6L438.8 347.9L438.8 349.2L438.8 350.5L438.8 351.7L438.8 353.0L438.8 354.3L438.8 355.6L438.8 356.9L438.8 358.2L438.8 359.5L438.8 360.8L438.8 362.1L438.8 363.4L438.8 364.7L438.8 366.0L438.8 367.3L437.9 367.0L437.1 366.7L436.2 366.4L435.3 366.1L434.4 365.8L433.5 365.5L433.5 364.3L433.5 363.0L433.5 361.8L433.5 360.6L433.5 359.3L433.5 358.1L433.5 356.9L433.5 355.6L433.5 354.4L433.5 353.2L433.5 352.0L433.5 350.7L433.5 349.5L433.5 348.3L433.5 347.0L433.5 345.8L433.5 344.6L433.5 343.3L433.5 342.1L433.5 340.9L433.5 339.6L433.5 338.4L433.5 337.2L433.5 335.9L433.5 334.7L433.5 333.5L433.5 332.3L433.5 331.0L433.5 329.8L433.5 328.6L433.5 327.3L433.5 326.1L433.5 324.9L433.5 323.6L433.5 322.4L434.4 322.4L435.3 322.4L436.2 322.4L437.1 322.4L438.0 322.4L438.9 322.4L439.8 322.4L440.7 322.4L441.5 322.4L441.8 323.7L442.1 325.0L442.3 326.3L442.6 327.6L442.8 328.9L443.1 330.2L443.3 331.5L443.6 332.8L443.9 334.1L444.1 335.5L444.4 336.8L444.6 338.1L444.9 339.5L445.1 340.8L445.4 342.2L445.7 343.5L445.9 344.9L446.2 346.2L446.4 347.6L446.7 349.0L447.1 351.6L447.4 353.3L447.6 355.0L447.9 356.6L448.1 358.3L448.4 356.8L448.6 355.3L448.9 353.8L449.1 352.3L449.4 350.8L449.6 349.5L449.9 348.2L450.1 346.9L450.4 345.6L450.6 344.3L450.9 342.9L451.1 341.6L451.4 340.3L451.6 338.9L451.9 337.6L452.2 336.2L452.4 334.8L452.7 333.5L452.9 332.1L453.2 330.7L453.4 329.4L453.7 328.0L453.9 326.6L454.2 325.2L454.4 323.8L454.7 322.4L455.6 322.4L456.4 322.4L457.3 322.4L458.2 322.4L459.1 322.4L460.0 322.4L460.9 322.4L461.8 322.4L462.7 322.4L462.7 323.9L462.7 325.4L462.7 326.9L462.7 328.4L462.7 330.0L462.7 331.5L462.7 333.0L462.7 334.5L462.7 336.0L462.7 337.5L462.7 339.0L462.7 340.5L462.7 342.1L462.7 343.6L462.7 345.1L462.7 346.6L462.7 348.1L462.7 349.6L462.7 351.1L462.7 352.6L462.7 354.2L462.7 355.7L462.7 357.2L462.7 358.7L462.7 360.2L462.7 361.7L462.7 363.2L462.7 364.7L462.7 366.3L462.7 367.8L462.7 369.3L462.7 370.8L462.7 372.3L462.7 373.8L462.7 375.3ZM468.4 377.3L468.4 375.6L468.4 374.0L468.4 372.4L468.4 370.8L468.4 369.2L468.4 367.6L468.4 366.0L468.4 364.4L468.4 362.8L468.4 361.1L468.4 359.5L468.4 357.9L468.4 356.3L468.4 354.7L468.4 353.1L468.4 351.5L468.4 349.9L468.4 348.2L468.4 346.6L468.4 345.0L468.4 343.9L468.4 342.8L468.4 341.8L468.3 340.9L468.3 340.0L468.3 339.2L468.3 338.5L468.3 337.7L468.3 337.0L468.2 336.4L468.2 335.7L468.2 335.1L469.1 335.2L470.0 335.3L470.9 335.3L471.8 335.4L472.8 335.5L473.7 335.5L473.7 335.9L473.7 336.4L473.7 337.0L473.8 337.8L473.8 338.8L473.8 340.0L473.9 341.1L473.9 342.2L473.9 343.0L473.9 343.8L473.9 344.4L473.9 344.9L474.0 344.9L474.3 343.5L474.5 342.2L474.8 341.1L475.0 340.1L475.3 339.2L475.5 338.6L475.7 338.0L476.0 337.4L476.2 337.0L476.5 336.5L476.8 336.2L477.0 335.9L477.4 335.6L477.7 335.4L478.1 335.3L478.4 335.2L478.9 335.1L479.3 335.1L479.6 335.2L480.0 335.2L480.3 335.3L480.6 335.5L480.8 335.7L481.1 335.9L481.1 337.8L481.1 339.8L481.1 341.8L481.1 343.8L481.1 345.7L480.6 345.5L480.2 345.3L479.8 345.1L479.4 345.0L479.0 344.9L478.6 344.8L477.9 344.8L477.3 345.0L476.7 345.4L476.2 346.0L475.7 346.8L475.3 347.8L474.9 349.0L474.6 350.4L474.4 351.9L474.2 353.7L474.1 355.6L474.1 357.8L474.1 359.4L474.1 361.1L474.1 362.7L474.1 364.4L474.1 366.0L474.1 367.7L474.1 369.3L474.1 371.0L474.1 372.6L474.1 374.3L474.1 375.9L474.1 377.5L474.1 379.2ZM503.2 374.1L503.1 376.4L502.9 378.6L502.5 380.5L502.0 382.2L501.4 383.6L500.6 384.9L499.6 385.8L498.6 386.5L497.4 387.0L496.2 387.1L494.8 387.0L493.3 386.6L491.9 386.0L490.5 385.3L489.3 384.4L488.2 383.5L487.2 382.4L486.4 381.1L485.6 379.8L484.9 378.3L484.4 376.6L483.9 374.8L483.5 372.9L483.2 370.8L484.0 370.7L484.8 370.7L485.7 370.7L486.5 370.6L487.4 370.6L488.2 370.5L488.3 371.6L488.5 372.7L488.8 373.6L489.0 374.4L489.3 375.1L489.7 375.7L490.1 376.3L490.5 376.8L491.1 377.2L491.8 377.6L492.5 377.9L493.3 378.2L494.1 378.4L494.8 378.5L495.4 378.5L495.9 378.4L496.4 378.2L496.8 377.9L497.2 377.5L497.4 377.0L497.7 376.4L497.8 375.6L497.9 374.8L497.9 373.9L497.9 373.1L497.8 372.4L497.7 371.7L497.5 371.0L497.3 370.4L497.0 369.9L496.7 369.3L496.3 368.8L495.8 368.3L495.3 367.8L494.7 367.3L494.0 366.8L492.5 365.7L491.2 364.8L490.0 363.8L489.0 363.0L488.1 362.2L487.5 361.5L487.0 360.7L486.5 359.9L486.0 359.1L485.6 358.3L485.2 357.4L484.9 356.4L484.7 355.4L484.4 354.3L484.3 353.2L484.1 352.0L484.1 350.8L484.0 349.5L484.1 347.3L484.3 345.4L484.6 343.6L485.1 342.1L485.7 340.6L486.5 339.4L487.3 338.3L488.3 337.5L489.4 336.8L490.6 336.4L491.9 336.1L493.4 336.1L494.6 336.3L495.8 336.7L496.9 337.3L497.9 338.0L498.8 339.0L499.7 340.1L500.4 341.4L501.1 342.9L501.6 344.6L502.1 346.4L502.4 348.4L502.7 350.6L501.8 350.7L501.0 350.8L500.1 350.8L499.3 350.9L498.4 351.0L497.6 351.1L497.5 350.1L497.4 349.2L497.2 348.4L497.0 347.6L496.7 347.0L496.4 346.4L496.0 345.9L495.6 345.5L495.2 345.1L494.6 344.9L494.0 344.7L493.4 344.5L492.7 344.5L492.1 344.5L491.6 344.6L491.1 344.8L490.7 345.0L490.3 345.3L490.0 345.7L489.7 346.2L489.5 346.7L489.4 347.4L489.3 348.1L489.3 348.9L489.3 349.6L489.4 350.2L489.5 350.8L489.6 351.4L489.8 351.9L490.1 352.3L490.4 352.8L490.7 353.2L491.1 353.6L491.6 354.0L492.1 354.4L492.7 354.8L493.6 355.3L494.4 355.9L495.2 356.4L495.9 357.0L496.6 357.5L497.3 358.1L498.0 358.6L498.6 359.2L499.1 359.8L499.6 360.4L500.1 361.0L500.5 361.7L500.9 362.4L501.3 363.2L501.6 364.0L501.9 364.8L502.2 365.7L502.5 366.7L502.7 367.7L502.9 368.8L503.0 370.0L503.1 371.3L503.2 372.6L503.2 374.1ZM507.7 390.5L507.7 388.4L507.7 386.3L507.7 384.2L507.7 382.1L507.7 380.0L507.7 377.9L507.7 375.8L508.6 376.0L509.4 376.2L510.2 376.5L511.1 376.7L511.9 376.9L512.8 377.1L513.6 377.3L513.6 379.5L513.6 381.7L513.6 383.8L513.6 386.0L513.6 388.2L513.6 390.3L513.6 392.5ZM554.3 382.1L554.2 386.0L553.9 389.5L553.5 392.7L552.9 395.5L552.1 397.9L551.1 399.9L550.0 401.5L548.7 402.7L547.3 403.4L545.7 403.8L543.9 403.7L542.0 403.2L540.2 402.5L538.5 401.4L537.0 400.2L535.7 398.7L534.4 397.0L533.3 395.0L532.3 392.8L531.5 390.4L530.7 387.7L530.1 384.8L529.6 381.6L529.3 378.2L530.1 378.0L530.9 377.9L531.8 377.7L532.6 377.5L533.4 377.4L534.2 377.2L535.1 377.0L535.3 379.0L535.6 380.9L535.9 382.6L536.4 384.1L536.8 385.4L537.4 386.6L538.0 387.6L538.7 388.5L539.4 389.3L540.3 389.9L541.2 390.4L542.1 390.8L544.0 391.0L545.6 390.6L546.8 389.4L547.7 387.5L548.2 385.0L548.4 381.7L548.4 380.5L548.3 379.5L548.2 378.4L548.1 377.5L547.9 376.6L547.7 375.7L547.4 375.0L547.1 374.2L546.8 373.5L546.5 372.8L546.1 372.2L545.7 371.6L545.2 370.9L544.5 370.3L543.7 369.5L542.8 368.7L541.8 367.9L540.6 367.0L539.6 366.1L538.7 365.3L537.9 364.6L537.2 364.0L536.6 363.4L536.1 362.9L535.7 362.4L535.3 361.8L534.9 361.3L534.6 360.7L534.2 360.2L533.9 359.6L533.5 358.9L533.2 358.3L532.9 357.6L532.6 356.9L532.4 356.1L532.1 355.3L531.9 354.5L531.7 353.6L531.5 352.7L531.3 351.7L531.2 350.7L531.0 349.7L530.9 348.6L530.8 347.5L530.7 346.3L530.7 345.1L530.6 343.8L530.6 342.5L530.7 339.2L530.9 336.2L531.3 333.4L531.9 331.0L532.6 328.7L533.5 326.8L534.6 325.1L535.8 323.7L537.1 322.6L538.6 322.2L540.3 322.0L542.0 322.0L543.7 322.0L545.3 322.2L546.7 322.4L548.0 323.3L549.1 324.5L550.1 326.0L550.9 327.8L551.6 329.9L552.3 332.4L552.8 335.3L553.2 338.5L553.5 342.1L552.7 342.4L551.8 342.6L551.0 342.9L550.2 343.1L549.4 343.4L548.5 343.6L547.7 343.9L547.5 342.2L547.3 340.6L547.0 339.2L546.7 338.0L546.3 336.8L545.9 335.9L545.4 335.0L544.8 334.3L544.2 333.8L543.5 333.4L542.7 333.1L541.9 333.0L540.3 333.2L538.9 333.9L537.8 335.2L537.1 336.9L536.6 339.2L536.5 342.1L536.5 343.0L536.5 344.0L536.6 344.8L536.7 345.6L536.9 346.4L537.0 347.1L537.3 347.7L537.5 348.4L537.8 349.0L538.1 349.5L538.4 350.1L538.8 350.6L539.2 351.1L539.8 351.7L540.5 352.4L541.3 353.1L542.3 353.8L543.4 354.7L544.7 355.6L545.9 356.6L546.9 357.5L547.9 358.4L548.6 359.3L549.3 360.1L549.9 360.9L550.4 361.8L550.9 362.7L551.4 363.6L551.8 364.5L552.1 365.5L552.5 366.6L552.8 367.7L553.0 368.9L553.3 370.1L553.5 371.4L553.7 372.7L553.9 374.1L554.0 375.6L554.1 377.1L554.2 378.7L554.3 380.4L554.3 382.1ZM568.0 407.5L566.4 407.8L564.9 407.5L563.6 406.7L562.3 405.3L561.2 403.4L560.3 400.5L559.4 397.1L558.7 393.4L558.2 389.3L557.8 384.9L557.6 380.2L557.5 375.1L557.6 369.9L557.8 365.2L558.2 360.8L558.7 356.9L559.4 353.4L560.3 350.2L561.3 347.5L562.4 345.1L563.6 343.2L565.0 341.9L566.5 341.0L568.1 340.7L569.3 340.8L570.5 341.1L571.6 341.9L572.7 342.9L573.6 344.2L574.5 345.8L575.3 347.7L576.0 349.9L576.6 352.2L577.1 354.8L577.4 357.7L577.7 360.8L576.9 361.0L576.1 361.2L575.2 361.5L574.4 361.7L573.6 361.9L572.8 362.2L571.9 362.4L571.8 360.9L571.7 359.4L571.5 358.1L571.3 356.9L571.0 355.8L570.7 354.8L570.4 353.9L570.0 353.3L569.5 352.7L569.1 352.4L568.5 352.2L568.0 352.2L566.6 352.9L565.5 354.9L564.6 358.0L564.0 362.4L563.7 367.9L563.5 374.7L563.7 381.5L564.0 387.1L564.7 391.4L565.5 394.3L566.7 395.8L568.0 396.1L568.6 395.8L569.1 395.5L569.5 394.9L570.0 394.2L570.4 393.4L570.8 392.3L571.1 391.2L571.4 389.9L571.7 388.4L571.9 386.8L572.0 385.1L572.1 383.2L573.0 383.1L573.8 383.0L574.6 382.9L575.4 382.8L576.2 382.8L577.1 382.7L577.9 382.6L577.7 384.7L577.6 386.8L577.3 388.8L577.0 390.7L576.7 392.6L576.3 394.4L575.8 396.1L575.3 397.8L574.7 399.3L574.1 400.7L573.5 402.0L572.8 403.2L572.1 404.3L571.3 405.2L570.5 406.0L569.7 406.7L568.9 407.2L568.0 407.5ZM587.7 352.4L588.1 350.2L588.5 348.2L589.0 346.4L589.5 344.8L590.0 343.4L590.6 342.2L591.2 341.2L591.8 340.4L592.5 339.8L593.2 339.3L593.9 339.0L594.7 338.9L595.9 339.0L596.9 339.4L597.8 340.1L598.7 341.1L599.4 342.4L600.1 344.1L600.7 346.0L601.2 348.2L601.5 350.8L601.8 353.6L601.9 356.7L602.0 360.0L602.0 362.1L602.0 364.2L602.0 366.3L602.0 368.4L602.0 370.5L602.0 372.7L602.0 374.8L602.0 376.9L602.0 379.0L602.0 381.1L602.0 383.2L602.0 385.3L602.0 387.4L602.0 389.5L602.0 391.6L602.0 393.7L602.0 395.8L601.2 396.0L600.4 396.3L599.5 396.5L598.7 396.8L597.9 397.0L597.1 397.3L596.3 397.5L596.3 395.4L596.3 393.2L596.3 391.1L596.3 388.9L596.3 386.8L596.3 384.6L596.3 382.5L596.3 380.3L596.3 378.1L596.3 376.0L596.3 373.8L596.3 371.7L596.3 369.5L596.3 367.4L596.3 365.2L596.2 360.6L595.9 356.8L595.3 353.9L594.5 351.9L593.6 350.8L592.4 350.5L591.7 350.7L591.1 351.1L590.5 351.9L589.9 352.9L589.5 354.1L589.0 355.7L588.6 357.4L588.3 359.3L588.1 361.3L587.9 363.5L587.8 365.8L587.7 368.2L587.7 370.5L587.7 372.8L587.7 375.1L587.7 377.4L587.7 379.6L587.7 381.9L587.7 384.2L587.7 386.5L587.7 388.8L587.7 391.1L587.7 393.3L587.7 395.6L587.7 397.9L587.7 400.2L586.9 400.4L586.1 400.7L585.3 401.0L584.5 401.2L583.6 401.5L582.8 401.7L582.0 402.0L582.0 399.7L582.0 397.4L582.0 395.2L582.0 392.9L582.0 390.6L582.0 388.4L582.0 386.1L582.0 383.9L582.0 381.6L582.0 379.3L582.0 377.1L582.0 374.8L582.0 372.5L582.0 370.3L582.0 368.0L582.0 365.7L582.0 363.5L582.0 361.2L582.0 358.9L582.0 356.7L582.0 354.4L582.0 352.1L582.0 349.9L582.0 347.6L582.0 345.3L582.0 343.1L582.0 340.8L582.0 338.5L582.0 336.3L582.0 334.0L582.0 331.8L582.0 329.5L582.0 327.2L582.0 325.0L582.0 322.7L582.0 321.7L582.0 320.9L582.8 320.9L583.6 320.9L584.5 320.9L585.3 320.9L586.1 320.9L586.9 320.9L587.7 321.0L587.7 321.7L587.7 322.7L587.7 325.0L587.7 327.2L587.7 329.4L587.7 331.7L587.7 333.9L587.7 336.1L587.7 338.4L587.7 340.6L587.7 342.6L587.7 344.6L587.7 346.6L587.7 348.5L587.6 350.5L587.6 352.4ZM620.5 390.0L620.5 388.1L620.5 386.1L620.5 384.2L620.5 382.3L620.5 380.3L620.5 378.4L620.5 376.4L620.5 374.5L620.5 372.5L620.5 370.6L620.5 368.7L620.5 366.7L620.5 364.8L620.5 362.8L620.5 360.9L620.4 356.7L620.1 353.3L619.6 350.7L619.0 348.9L618.1 347.9L617.1 347.6L616.6 347.8L616.0 348.2L615.6 348.8L615.1 349.7L614.7 350.8L614.3 352.2L614.0 353.8L613.7 355.4L613.5 357.3L613.3 359.2L613.2 361.3L613.2 363.5L613.2 365.6L613.2 367.6L613.2 369.7L613.2 371.7L613.2 373.8L613.2 375.8L613.2 377.9L613.2 379.9L613.2 382.0L613.2 384.1L613.2 386.1L613.2 388.2L613.2 390.2L613.2 392.3L612.4 392.5L611.6 392.8L610.8 393.0L609.9 393.3L609.1 393.5L608.3 393.8L607.5 394.1L607.5 392.0L607.5 390.0L607.5 388.0L607.5 385.9L607.5 383.9L607.5 381.8L607.5 379.8L607.5 377.8L607.5 375.7L607.5 373.7L607.5 371.7L607.5 369.6L607.5 367.6L607.5 365.6L607.5 363.5L607.5 361.5L607.5 359.5L607.5 357.4L607.5 355.4L607.5 353.4L607.5 351.3L607.5 349.9L607.5 348.6L607.5 347.3L607.5 346.2L607.5 345.1L607.4 344.1L607.4 343.2L607.4 342.3L607.4 341.4L607.4 340.6L607.3 339.8L607.3 339.0L608.2 339.0L609.1 338.9L610.1 338.8L611.0 338.8L611.9 338.7L612.8 338.6L612.8 339.0L612.8 339.6L612.9 340.4L612.9 341.3L612.9 342.4L612.9 343.7L613.0 345.0L613.0 346.1L613.0 347.1L613.0 348.0L613.0 348.7L613.1 349.3L613.1 349.3L613.5 347.3L613.9 345.5L614.3 343.9L614.8 342.4L615.3 341.2L615.8 340.1L616.3 339.3L616.9 338.5L617.5 338.0L618.2 337.5L618.8 337.3L619.5 337.1L621.1 337.4L622.5 338.2L623.6 339.7L624.5 341.8L625.2 344.5L625.7 347.8L625.8 347.8L626.2 345.9L626.6 344.1L627.0 342.6L627.5 341.2L628.0 340.1L628.5 339.1L629.0 338.3L629.6 337.6L630.3 337.1L631.0 336.7L631.7 336.4L632.5 336.3L633.5 336.3L634.5 336.7L635.3 337.3L636.1 338.2L636.8 339.3L637.4 340.7L637.9 342.4L638.3 344.2L638.7 346.3L638.9 348.7L639.0 351.3L639.1 354.1L639.1 355.9L639.1 357.6L639.1 359.4L639.1 361.2L639.1 363.0L639.1 364.7L639.1 366.5L639.1 368.3L639.1 370.0L639.1 371.8L639.1 373.6L639.1 375.4L639.1 377.1L639.1 378.9L639.1 380.7L639.1 382.5L639.1 384.2L638.1 384.5L637.2 384.8L636.2 385.1L635.3 385.4L634.3 385.7L633.4 386.0L633.4 384.2L633.4 382.3L633.4 380.5L633.4 378.7L633.4 376.9L633.4 375.0L633.4 373.2L633.4 371.4L633.4 369.6L633.4 367.7L633.4 365.9L633.4 364.1L633.4 362.3L633.4 360.4L633.4 358.6L633.3 354.7L633.0 351.5L632.6 349.1L631.9 347.3L631.1 346.4L630.1 346.1L629.5 346.3L629.0 346.6L628.5 347.2L628.1 348.0L627.7 348.9L627.3 350.1L627.0 351.5L626.7 353.0L626.5 354.6L626.3 356.5L626.2 358.4L626.1 360.5L626.1 362.5L626.1 364.5L626.1 366.5L626.1 368.5L626.1 370.4L626.1 372.4L626.1 374.4L626.1 376.4L626.1 378.4L626.1 380.3L626.1 382.3L626.1 384.3L626.1 386.3L626.1 388.3ZM644.6 328.0L644.6 326.3L644.6 324.5L644.6 322.7L644.6 321.9L644.6 321.3L645.4 321.3L646.2 321.3L647.0 321.3L647.9 321.3L648.7 321.3L649.5 321.3L650.3 321.3L650.3 321.9L650.3 322.7L650.3 324.4L650.3 326.2L650.3 327.9ZM644.6 382.5L644.6 380.8L644.6 379.1L644.6 377.4L644.6 375.7L644.6 374.0L644.6 372.3L644.6 370.6L644.6 368.8L644.6 367.1L644.6 365.4L644.6 363.7L644.6 362.0L644.6 360.3L644.6 358.6L644.6 356.9L644.6 355.2L644.6 353.5L644.6 351.7L644.6 350.0L644.6 348.3L644.6 346.6L644.6 344.9L644.6 343.2L644.6 341.5L644.6 339.8L644.6 338.1L644.6 336.4L645.4 336.3L646.2 336.2L647.0 336.2L647.9 336.1L648.7 336.1L649.5 336.0L650.3 335.9L650.3 337.6L650.3 339.3L650.3 340.9L650.3 342.6L650.3 344.2L650.3 345.9L650.3 347.6L650.3 349.2L650.3 350.9L650.3 352.5L650.3 354.2L650.3 355.9L650.3 357.5L650.3 359.2L650.3 360.8L650.3 362.5L650.3 364.2L650.3 365.8L650.3 367.5L650.3 369.1L650.3 370.8L650.3 372.5L650.3 374.1L650.3 375.8L650.3 377.4L650.3 379.1L650.3 380.7ZM661.8 377.9L661.0 378.1L660.3 378.1L659.6 377.9L659.0 377.6L658.4 377.1L657.9 376.4L657.5 375.6L657.2 374.5L656.9 373.3L656.7 371.9L656.6 370.4L656.6 368.6L656.6 366.9L656.6 365.2L656.6 363.5L656.6 361.8L656.6 360.1L656.6 358.4L656.6 356.7L656.6 355.0L656.6 353.3L656.6 351.6L656.6 349.9L656.6 348.2L656.6 346.5L656.6 344.8L656.6 343.1L655.6 343.2L654.7 343.3L653.8 343.4L653.8 341.5L653.8 339.6L653.8 337.6L653.8 335.7L654.8 335.6L655.8 335.5L656.8 335.5L657.1 333.8L657.4 332.1L657.7 330.4L658.0 328.7L658.3 327.0L658.6 325.3L659.5 325.3L660.4 325.3L661.3 325.2L662.2 325.2L662.2 326.9L662.2 328.5L662.2 330.2L662.2 331.8L662.2 333.4L662.2 335.1L663.1 335.0L663.9 335.0L664.7 334.9L665.6 334.8L666.4 334.8L666.4 336.6L666.4 338.4L666.4 340.2L666.4 342.0L665.6 342.1L664.7 342.2L663.9 342.3L663.1 342.4L662.2 342.5L662.2 344.0L662.2 345.6L662.2 347.1L662.2 348.7L662.2 350.2L662.2 351.8L662.2 353.3L662.2 354.9L662.2 356.5L662.2 358.0L662.2 359.6L662.2 361.1L662.2 362.7L662.2 364.2L662.2 365.2L662.3 366.1L662.4 366.9L662.5 367.5L662.6 368.1L662.8 368.6L663.1 369.0L663.3 369.3L663.6 369.5L663.9 369.6L664.3 369.6L664.7 369.5L665.0 369.5L665.2 369.3L665.5 369.2L665.9 369.0L666.2 368.8L666.6 368.5L666.6 370.1L666.6 371.8L666.6 373.4L666.6 375.1L665.9 375.7L665.2 376.2L664.4 376.7L663.6 377.2L662.7 377.6L661.8 377.9ZM668.8 375.0L668.8 373.1L668.8 371.3L668.8 369.4L668.8 367.6L669.3 366.2L669.8 364.9L670.3 363.6L670.8 362.3L671.3 361.0L671.8 359.7L672.3 358.4L672.8 357.1L673.3 355.8L673.8 354.5L674.3 353.2L674.7 352.0L675.2 350.7L675.7 349.5L676.2 348.3L676.7 347.0L677.2 345.8L677.7 344.6L678.2 343.4L678.7 342.2L679.2 341.0L678.3 341.1L677.5 341.2L676.6 341.3L675.7 341.4L674.9 341.5L674.0 341.6L673.1 341.7L672.3 341.8L671.4 341.9L670.5 342.0L669.7 342.1L669.7 340.6L669.7 339.1L669.7 337.6L669.7 336.1L669.7 334.5L670.5 334.5L671.3 334.4L672.2 334.4L673.0 334.3L673.8 334.2L674.7 334.2L675.5 334.1L676.3 334.1L677.2 334.0L678.0 333.9L678.8 333.9L679.7 333.8L680.5 333.8L681.3 333.7L682.2 333.6L683.0 333.6L683.8 333.5L684.7 333.5L685.5 333.4L685.5 334.8L685.5 336.1L685.5 337.5L685.5 338.8L685.5 340.2L685.0 341.3L684.5 342.5L684.0 343.6L683.5 344.8L683.0 346.0L682.6 347.1L682.1 348.3L681.6 349.5L681.1 350.7L680.6 351.9L680.1 353.1L679.6 354.4L679.1 355.6L678.6 356.8L678.1 358.1L677.6 359.3L677.2 360.6L676.7 361.8L676.2 363.1L675.7 364.4L675.2 365.6L676.1 365.4L676.9 365.2L677.8 365.0L678.7 364.7L679.5 364.5L680.4 364.3L681.3 364.0L682.2 363.8L683.0 363.6L683.9 363.3L684.8 363.1L685.6 362.9L686.5 362.6L686.5 364.0L686.5 365.4L686.5 366.8L686.5 368.1L686.5 369.5Z"/>
</defs>
<g mask="url(#rm)"><g transform="translate(0,822) scale(1,-1)" filter="url(#rb)"><use href="#wa" fill="#d0203a" stroke="#6a4a8a" stroke-width="2"/></g></g>
<use href="#wa" fill="none" stroke="#3d57a8" stroke-width="3.400" stroke-linejoin="round" filter="url(#wb)"/>
<use href="#wa" fill="#e1001c" stroke="#5a4aa0" stroke-width="1" stroke-linejoin="round"/>
</svg>
<svg style="left:810px;top:195px" width="240" height="270" viewBox="0 0 640 720"><defs><clipPath id="pc"><polygon points="182,32 598,148 440,700 28,582"/></clipPath><filter id="pb" x="-5%" y="-5%" width="110%" height="110%"><feGaussianBlur stdDeviation="1.900"/></filter><radialGradient id="hg" cx=".45" cy=".3" r=".75"><stop offset="0" stop-color="#ecc4a8"/><stop offset=".6" stop-color="#d9a283"/><stop offset="1" stop-color="#b27a5c"/></radialGradient><radialGradient id="sg" cx=".4" cy=".35" r=".8"><stop offset="0" stop-color="#d4dc90"/><stop offset=".65" stop-color="#bfcb74"/><stop offset="1" stop-color="#94a44c"/></radialGradient><linearGradient id="jg" x1="0" y1="0" x2="1" y2="1"><stop offset="0" stop-color="#f04a2c"/><stop offset="1" stop-color="#d42a1a"/></linearGradient></defs><g id="ph" clip-path="url(#pc)"><g filter="url(#pb)"><rect x="0" y="0" width="640" height="720" fill="#3a2a1c"/><polygon points="170,20 400,85 335,340 60,340 90,250" fill="#8a4a1a"/><polygon points="182,32 270,56 264,82 176,58" fill="#b0672a"/><polygon points="256,50 402,92 396,124 262,86" fill="#1a2026"/><polygon points="180,62 266,86 247,162 156,138" fill="#b4641c"/><polygon points="196,70 236,82 220,150 178,138" fill="#c98238" opacity=".7"/><polygon points="240,84 262,90 246,158 226,152" fill="#8a4a16" opacity=".8"/><polygon points="268,92 385,124 372,170 256,140" fill="#5a3416"/><polygon points="150,140 250,166 246,182 146,156" fill="#b56c2c"/><polygon points="146,158 244,184 226,250 126,226" fill="#4a2c14"/><ellipse cx="165" cy="205" rx="32" ry="34" fill="#1c1a1c"/><path d="M140 185h14M160 182h14M180 186h10M142 200h12M162 204h16M146 218h30" stroke="#e8e0e0" stroke-width="5"/><path d="M172 196h14" stroke="#d03030" stroke-width="6"/><polygon points="128,232 226,256 222,272 124,248" fill="#a8622a"/><polygon points="120,250 222,274 205,340 100,320" fill="#3a2412"/><polygon points="105,292 175,305 168,335 98,322" fill="#3f6fb0"/><polygon points="108,300 170,312 168,322 106,310" fill="#9fc0e6"/><polygon points="92,330 140,342 120,420 70,400" fill="#2c2a30"/><polygon points="80,370 120,380 110,420 72,410" fill="#6a5a50"/><polygon points="262,88 276,92 222,300 208,296" fill="#b06a2c"/><polygon points="262,108 296,114 288,160 254,154" fill="#2b4fa0"/><polygon points="300,100 330,108 322,140 296,134" fill="#2a2a2a"/><polygon points="338,112 392,128 374,200 330,180" fill="#e9e4e0"/><polygon points="350,150 385,160 376,200 345,186" fill="#c83232"/><polygon points="362,118 392,128 388,146 358,136" fill="#c24040"/><polygon points="392,92 610,150 520,420 330,360" fill="#0f2e1e"/><polygon points="394,92 600,148 595,170 390,114" fill="#1f6a44"/><polygon points="390,100 410,106 352,330 334,324" fill="#1d5e3c"/><polygon points="545,160 565,166 508,384 488,378" fill="#20683f"/><polygon points="372,270 505,308 500,324 368,286" fill="#1e6540"/><polygon points="352,342 490,384 486,398 348,356" fill="#1b5a3a"/><polygon points="540,236 590,250 586,262 536,248" fill="#1e6540"/><polygon points="520,312 570,326 566,338 516,324" fill="#1e6540"/><polygon points="424,148 492,160 484,216 416,204" fill="#eef4ee"/><polygon points="431,156 486,166 479,209 424,199" fill="#5fc07a"/><path d="M440 172l34 6M438 184l30 5" stroke="#1e5a34" stroke-width="5"/><polygon points="384,212 395,215 380,278 369,275" fill="#3b3a5a"/><polygon points="395,215.2 406,218.2 391,281.2 380,278.2" fill="#8a7a4a"/><polygon points="406,218.39999999999998 417,221.39999999999998 402,284.4 391,281.4" fill="#2f4a88"/><polygon points="417,221.59999999999997 428,224.59999999999997 413,287.59999999999997 402,284.59999999999997" fill="#5a3030"/><polygon points="428,224.79999999999995 439,227.79999999999995 424,290.79999999999995 413,287.79999999999995" fill="#a8a080"/><polygon points="439,227.99999999999994 450,230.99999999999994 435,293.99999999999994 424,290.99999999999994" fill="#3a5a7a"/><polygon points="450,231.19999999999993 461,234.19999999999993 446,297.19999999999993 435,294.19999999999993" fill="#5a4a7a"/><polygon points="461,234.39999999999992 472,237.39999999999992 457,300.3999999999999 446,297.3999999999999" fill="#22305a"/><polygon points="362,288 373,291 358,348 347,345" fill="#a89880"/><polygon points="373.5,291.4 384.5,294.4 369.5,351.4 358.5,348.4" fill="#5a2a3a"/><polygon points="385.0,294.79999999999995 396.0,297.79999999999995 381.0,354.79999999999995 370.0,351.79999999999995" fill="#3a4a7a"/><polygon points="396.5,298.19999999999993 407.5,301.19999999999993 392.5,358.19999999999993 381.5,355.19999999999993" fill="#908070"/><polygon points="408.0,301.5999999999999 419.0,304.5999999999999 404.0,361.5999999999999 393.0,358.5999999999999" fill="#4a3a6a"/><polygon points="419.5,304.9999999999999 430.5,307.9999999999999 415.5,364.9999999999999 404.5,361.9999999999999" fill="#2a4a78"/><polygon points="431.0,308.39999999999986 442.0,311.39999999999986 427.0,368.39999999999986 416.0,365.39999999999986" fill="#803a3a"/><polygon points="442.5,311.79999999999984 453.5,314.79999999999984 438.5,371.79999999999984 427.5,368.79999999999984" fill="#3a3a5a"/><polygon points="454.0,315.1999999999998 465.0,318.1999999999998 450.0,375.1999999999998 439.0,372.1999999999998" fill="#9088a8"/><polygon points="465.5,318.5999999999998 476.5,321.5999999999998 461.5,378.5999999999998 450.5,375.5999999999998" fill="#30304a"/><polygon points="477.0,321.9999999999998 488.0,324.9999999999998 473.0,381.9999999999998 462.0,378.9999999999998" fill="#6a5a3a"/><polygon points="545,268 562,272 552,330 534,326" fill="#d8c8a0"/><polygon points="556,272 566,274 556,330 548,328" fill="#a04030"/><polygon points="480,380 560,400 520,520 440,500" fill="#18281e"/><polygon points="24,530 112,548 122,622 16,592" fill="#737b8c"/><polygon points="40,500 90,512 86,545 36,530" fill="#a0622a"/><polygon points="258,270 330,280 332,320 250,318" fill="#c48c6c"/><path d="M236 300 C200 310 150 330 128 348 C95 380 70 450 60 500 C56 540 90 580 130 590 L150 610 L240 645 L300 640 L330 520 L392 470 L392 400 C390 370 372 350 345 335 L318 300 Z" fill="url(#jg)"/><path d="M128 348 C110 400 100 450 112 520 C130 560 160 570 190 560 L150 470 Z" fill="#c92818" opacity=".55"/><path d="M236 300 C250 320 290 326 318 300 L325 312 C295 338 250 336 228 310Z" fill="#c4281a"/><path d="M262 316 L206 442" stroke="#2a1a1a" stroke-width="7" stroke-linecap="round"/><path d="M285 405l40 8" stroke="#b82a20" stroke-width="5"/><ellipse cx="302" cy="215" rx="58" ry="72" fill="url(#hg)" transform="rotate(6 302 215)"/><ellipse cx="352" cy="252" rx="9" ry="18" fill="#cf9272" transform="rotate(10 352 252)"/><path d="M262 192c8-5 18-5 26-1M306 200c8-4 18-2 24 3" stroke="#8a6450" stroke-width="3" fill="none" stroke-linecap="round"/><ellipse cx="276" cy="206" rx="7" ry="3.500" fill="#5a4034"/><ellipse cx="320" cy="214" rx="7" ry="3.500" fill="#5a4034"/><path d="M292 215c-3 10-5 16-3 22 4 3 10 3 14 1" stroke="#b07a5c" stroke-width="3" fill="none"/><path d="M272 250c10 8 28 10 42 2" stroke="#a85a4a" stroke-width="4" fill="none" stroke-linecap="round"/><ellipse cx="192" cy="535" rx="22" ry="26" fill="#d39a78"/><ellipse cx="268" cy="566" rx="30" ry="14" fill="#c98c6a" transform="rotate(-20 268 566)"/><path d="M318 470 C300 500 296 540 310 570 C330 600 380 600 420 610 L470 690 L482 560 L400 520 Z" fill="#6a4a2e"/><path d="M330 560 C360 575 420 590 472 575 L468 660 L430 690 L400 620Z" fill="#5a3e26"/><path d="M290 590 C270 610 265 640 272 650 L430 692 C440 660 430 630 420 612 C380 610 330 600 310 575Z" fill="#ddd9cf"/><path d="M306 490 L224 552" stroke="#dcd9cd" stroke-width="62" stroke-linecap="round" fill="none"/><path d="M330 470 L300 520" stroke="#bab6a8" stroke-width="14" stroke-linecap="round" fill="none" opacity=".7"/><ellipse cx="197" cy="594" rx="38" ry="29" fill="#d2e088" transform="rotate(-38 197 594)"/><ellipse cx="185" cy="612" rx="18" ry="10" fill="#b5c866" transform="rotate(-25 185 612)"/><path d="M395 385 C385 372 383 366 392 366 C404 368 412 376 416 384Z" fill="#b8c868"/><ellipse cx="436" cy="462" rx="88" ry="98" fill="url(#sg)" transform="rotate(14 436 462)"/><ellipse cx="392" cy="372" rx="12" ry="8" fill="#c5d478" transform="rotate(30 392 372)"/><path d="M400 392c8-8 18-8 26-2M452 408c14-6 30 0 40 10" stroke="#3a3a1c" stroke-width="6" fill="none" stroke-linecap="round"/><ellipse cx="414" cy="404" rx="11" ry="8" fill="#f2f0e4"/><circle cx="415" cy="404" r="5" fill="#4a3420"/><ellipse cx="468" cy="430" rx="13" ry="9" fill="#f2f0e4" transform="rotate(15 468 430)"/><circle cx="469" cy="430" r="5.500" fill="#4a3420"/><ellipse cx="430" cy="432" rx="24" ry="28" fill="#ccd884" transform="rotate(12 430 432)"/><path d="M410 446c6 8 16 12 28 12" stroke="#8c9c48" stroke-width="4" fill="none"/><path d="M358 462c20 32 70 52 112 46" stroke="#6a7a30" stroke-width="5" fill="none" stroke-linecap="round"/><path d="M352 455c2 6 6 10 10 12" stroke="#6a7a30" stroke-width="4" fill="none" stroke-linecap="round"/><ellipse cx="436" cy="682" rx="14" ry="12" fill="#c47a6a"/></g></g></svg>
<div class="abs" style="left:368px;top:543px;width:721.5px;height:31px;border:1px solid #6a6a6a"></div>
<div class="t" style="left:374.50px;top:546.59px;font-size:18.2px;color:#ececec;transform:scaleX(0.9505);transform-origin:0 0;-webkit-text-stroke:.5px #222;">Click to add subtitle</div>
<div class="abs" style="left:40px;top:622px;width:74.800px;height:26.800px;border-radius:4.500px;background:#5b5b5b"></div>
<div class="abs" style="left:19.500px;top:612px;width:46px;height:46px;border-radius:23px;background:#5a5a5a"></div>
<div class="abs" style="left:23.500px;top:616px;width:38px;height:38px;border-radius:19px;background:#4c8fec"></div>
<div class="abs" style="left:35.500px;top:625.200px;width:5.900px;height:20.600px;background:#fff"></div>
<div class="abs" style="left:47px;top:625.200px;width:5.900px;height:20.600px;background:#fff"></div>
<div class="t" style="left:75.20px;top:627.86px;font-size:16.7px;color:#fff;font-weight:bold;transform:scaleX(0.9933);transform-origin:0 0;">0:00</div>
<div id="status"></div>
<div class="t" style="left:7.50px;top:664.48px;font-size:11.6px;color:#444;transform:scaleX(0.8977);transform-origin:0 0;">Slide 1 of 1</div>
<svg style="left:92px;top:662px" width="15" height="15" viewBox="0 0 15 15" fill="none" stroke="#444" stroke-width="1.1" stroke-linecap="round" stroke-linejoin="round"><circle cx="6.800" cy="2.400" r="1.700"/><path d="M1.200 5.600c3.600 1.200 7.600 1.200 11.200 0M4.600 6.400v3.200L2.800 13.600M9 6.400v3.200l.8 1.600M4.600 9.600h4.400"/><path d="M9.400 10.600l4.200 3.600M13.600 10.600l-4.200 3.600" stroke-width="1.200"/></svg>
<div class="t" style="left:110.25px;top:664.48px;font-size:11.6px;color:#444;transform:scaleX(0.9048);transform-origin:0 0;">Accessibility: Investigate</div>
<svg style="left:860px;top:661px" width="17" height="17" viewBox="0 0 17 17" fill="none" stroke="#444" stroke-width="1.1" stroke-linecap="round" stroke-linejoin="round"><path d="M6 3.600L8.500 1.200 11 3.600"/><path d="M1 7.400h15M1 10.600h15M1 13.800h15"/></svg>
<div class="t" style="left:878.50px;top:664.48px;font-size:11.6px;color:#444;transform:scaleX(0.9174);transform-origin:0 0;">Notes</div>
<div class="abs" style="left:925px;top:659px;width:38.800px;height:21px;background:#dadada"></div>
<svg style="left:937px;top:663px" width="15" height="13" viewBox="0 0 15 13" fill="none" stroke="#444" stroke-width="1.1" stroke-linecap="round" stroke-linejoin="round"><path d="M.700 .700h13.600v11.200H.700z"/><path d="M3.400 .700v11.200M3.400 8.800h10.900"/><path d="M6.600 3.200h5v3.200h-5z" stroke-width="1"/></svg>
<svg style="left:976.5px;top:663px" width="15" height="13" viewBox="0 0 15 13" fill="none" stroke="#444" stroke-width="1.1" stroke-linecap="round" stroke-linejoin="round"><path d="M.700 .700h5.200v4.400H.700zM8.800 .700H14v4.400H8.800zM.700 7.600h5.200V12H.700zM8.800 7.600H14V12H8.800z"/></svg>
<svg style="left:1016.5px;top:663px" width="15" height="13" viewBox="0 0 15 13" fill="none" stroke="#444" stroke-width="1.1" stroke-linecap="round" stroke-linejoin="round"><path d="M7.400 2C5.600 .800 3 .600 .800 1v10c2.200-.400 4.800-.200 6.600 1 1.800-1.200 4.400-1.400 6.600-1V1c-2.200-.400-4.800-.200-6.600 1zM7.400 2v10"/><path d="M2.600 3.600h3M2.600 5.800h3M2.600 8h3M9.400 3.600h3M9.400 5.800h3M9.400 8h3" stroke-width=".800"/></svg>
<svg style="left:1056.5px;top:662.5px" width="15" height="14" viewBox="0 0 15 14" fill="none" stroke="#444" stroke-width="1.1" stroke-linecap="round" stroke-linejoin="round"><path d="M.700 .800h13.400M1.800 .800v6.800h11.200V.800M7.400 7.600v3.800M4.600 12.800h5.600"/><path d="M5 3h4.800v2.400H5z" stroke-width=".900"/></svg>
<div class="abs" style="left:1091px;top:669px;width:7px;height:1.200px;background:#b8b8b8"></div>
<div class="abs" style="left:1104px;top:669px;width:98.700px;height:1px;background:#6e6e6e"></div>
<div class="abs" style="left:1153px;top:666px;width:1px;height:7px;background:#6e6e6e"></div>
<div class="abs" style="left:1133px;top:663.600px;width:4.600px;height:11.400px;background:#4a4a4a;border-radius:1px"></div>
<div class="abs" style="left:1208.500px;top:669px;width:7px;height:1.200px;background:#b0b0b0"></div><div class="abs" style="left:1211.400px;top:666.100px;width:1.200px;height:7px;background:#b0b0b0"></div>
<div class="t" style="left:1228.40px;top:664.48px;font-size:11.6px;color:#444;transform:scaleX(0.8614);transform-origin:0 0;">65%</div>
<svg style="left:1260.5px;top:661.5px" width="17" height="17" viewBox="0 0 17 17" fill="none" stroke="#444" stroke-width="1.1" stroke-linecap="round" stroke-linejoin="round"><rect x="4.800" y="5" width="7" height="6.600" rx=".800"/><path d="M6.400 2.800L8.300 .900l1.900 1.900M6.400 13.800l1.900 1.900 1.900-1.900M2.800 6.400L.900 8.300l1.900 1.900M13.800 6.400l1.900 1.900-1.900 1.900"/></svg>
<div id="taskbar"></div>
<svg style="left:16px;top:691.5px" width="17" height="17" viewBox="0 0 17 17" ><path d="M0 2.400L7.200 1.300V8H0zM8.200 1.150L16.400 0V8H8.200zM0 9h7.200v6.700L0 14.600zM8.200 9h8.200v8l-8.200-1.150z" fill="#fff"/></svg>
<div class="abs" style="left:48px;top:680px;width:344px;height:40px;background:#f2f2f2;border:1px solid #b9b9b9;border-bottom:none"></div>
<svg style="left:59px;top:691px" width="18" height="18" viewBox="0 0 18 18" ><circle cx="11.400" cy="6.800" r="5.200" fill="none" stroke="#222" stroke-width="1.300"/><path d="M7.600 10.600L1.400 16.600" stroke="#222" stroke-width="1.500" stroke-linecap="round"/></svg>
<div class="t" style="left:89.00px;top:693.30px;font-size:15px;color:#444;transform:scaleX(0.9625);transform-origin:0 0;">Type here to search</div>
<svg style="left:407.5px;top:691px" width="18" height="18" viewBox="0 0 18 18" ><path d="M3.600 3.800h9v10.200h-9z" fill="none" stroke="#fff" stroke-width="1.300"/><path d="M.600 1.400v3M.600 13.400v3M.600 5.800v6.200M3.600 1.200h9M3.600 16.600h9" stroke="#fff" stroke-width="1.200"/><path d="M15.600 1.200v6M15.600 11.400v5.400" stroke="#fff" stroke-width="1.300"/><circle cx="15.600" cy="9.200" r="1.300" fill="#fff"/></svg>
<svg style="left:454.5px;top:687px" width="25" height="25" viewBox="0 0 25 25" ><defs><linearGradient id="eg1" x1="0" y1="0" x2="1" y2="1"><stop offset="0" stop-color="#35c1a0"/><stop offset="1" stop-color="#5fd06a"/></linearGradient>
<linearGradient id="eg2" x1="0" y1="0" x2="0" y2="1"><stop offset="0" stop-color="#1b8fd8"/><stop offset="1" stop-color="#0c59a4"/></linearGradient></defs>
<circle cx="12.500" cy="12.500" r="12.200" fill="url(#eg2)"/>
<path d="M1 9.500C3 3.500 8 .300 12.500 .300c7 0 12.200 5 12.200 11 0 4-3 6.200-6.200 6.200-2.600 0-4-1.200-4-2.400 0-1 1-1.400 1-3 0-2.600-2.600-4.600-5.800-4.600-4 0-7 2.200-8.700 2z" fill="url(#eg1)"/>
<path d="M9 12c-1.500 2-1.200 5.500 1.400 8 2.400 2.200 6 2.600 9 1.400-2 2.400-5 3.500-8 3.200C6 24 2 19.500 1.200 15c1-3 4.600-4.400 7.800-3z" fill="#1565b8"/>
<circle cx="14" cy="12.500" r="2.600" fill="#1f2f3e"/></svg>
<svg style="left:504.5px;top:690.5px" width="23" height="18" viewBox="0 0 23 18" ><path d="M.500 2.200c0-.800.600-1.400 1.400-1.400h6.200l2 2.200H21c.800 0 1.400.600 1.400 1.400v12H.500z" fill="#e8a92c"/>
<path d="M.500 5h22v12c0 .500-.400.900-.900.900H1.400c-.500 0-.900-.400-.900-.900z" fill="#fbd968"/>
<path d="M5.500 10.500h12c.600 0 1 .400 1 1V18H4.500v-6.500c0-.600.400-1 1-1z" fill="#3d8ee0"/><path d="M8.500 14h6v4h-6z" fill="#fbd968"/></svg>
<div class="abs" style="left:496px;top:717.700px;width:40px;height:2.300px;background:#8cb9ea"></div>
<svg style="left:553px;top:688px" width="25" height="24" viewBox="0 0 25 24" ><path d="M7.500 5V3.600c0-1.600 1.200-2.800 2.800-2.800h4.400c1.600 0 2.800 1.200 2.800 2.800V5" fill="none" stroke="#2aa0c8" stroke-width="1.300"/>
<path d="M1 5h23v15.500c0 1.700-1.300 3-3 3H4c-1.700 0-3-1.300-3-3z" fill="#f4f2f0"/>
<rect x="7" y="8.500" width="5" height="5" fill="#f25022"/><rect x="13" y="8.500" width="5" height="5" fill="#7fba00"/><rect x="7" y="14.500" width="5" height="5" fill="#00a4ef"/><rect x="13" y="14.500" width="5" height="5" fill="#ffb900"/></svg>
<svg style="left:601.5px;top:689px" width="25" height="22" viewBox="0 0 25 22" ><path d="M12.500 .500L24.500 7.500H.500z" fill="#1473c4"/><path d="M.500 7.500h24v13c0 .600-.400 1-1 1H1.500c-.600 0-1-.400-1-1z" fill="#32a5ec"/>
<path d="M2.500 8h20l-10 7.500z" fill="#f4f8fc"/><path d="M.500 21l9-8 3 2.300 3-2.300 9 8z" fill="#1e8ee0"/></svg>
<svg style="left:651px;top:688px" width="25" height="25" viewBox="0 0 25 25" ><circle cx="12.500" cy="12.500" r="12.200" fill="#e33b2e"/>
<path d="M12.500 12.500L1.950 6.400A12.200 12.200 0 0 0 11.400 24.650z" fill="#2da94f"/>
<path d="M12.500 12.500L11.400 24.650A12.200 12.200 0 0 0 23.050 6.400z" fill="#fcc31e"/>
<path d="M1.950 6.400A12.200 12.200 0 0 1 23.050 6.400H12.500z" fill="#e33b2e"/>
<circle cx="12.500" cy="12.500" r="5.800" fill="#fff"/><circle cx="12.500" cy="12.500" r="4.500" fill="#3b7ded"/></svg>
<div class="abs" style="left:642.700px;top:717.700px;width:40.700px;height:2.300px;background:#8cb9ea"></div>
<div class="abs" style="left:688px;top:680px;width:48px;height:40px;background:#485866"></div>
<svg style="left:699.5px;top:687.5px" width="25" height="25" viewBox="0 0 25 25" ><circle cx="12.500" cy="12.600" r="11.400" fill="none" stroke="#6ea6cf" stroke-width="1.200"/><circle cx="12.500" cy="12.600" r="4.200" fill="#7fc0ec"/></svg>
<div class="abs" style="left:688px;top:717.700px;width:48px;height:2.300px;background:#8cb9ea"></div>
<svg style="left:746px;top:688px" width="27" height="25" viewBox="0 0 27 25" ><circle cx="15" cy="12.500" r="11.800" fill="#ec6a41"/><path d="M15 .700a11.800 11.800 0 0 1 11.800 11.800H15z" fill="#f5a88a"/><path d="M15 12.500h11.800A11.800 11.800 0 0 1 15 24.300z" fill="#d5472a"/>
<rect x="1" y="5.500" width="14" height="14" rx="1.600" fill="#c3391f"/><text x="8" y="16.800" font-family="Liberation Sans" font-weight="bold" font-size="11.500" fill="#fff" text-anchor="middle">P</text></svg>
<div class="abs" style="left:740.600px;top:717.700px;width:40.400px;height:2.300px;background:#8cb9ea"></div>
<svg style="left:970px;top:696.5px" width="14" height="8" viewBox="0 0 14 8" fill="none" stroke="#fff" stroke-width="1.200" stroke-linecap="round" stroke-linejoin="round"><path d="M.800 7L6.700 1.100 12.600 7"/></svg>
<svg style="left:999.5px;top:692px" width="19" height="16" viewBox="0 0 19 16" ><path d="M4 11.500c-2 0-3.400-1.400-3.400-3.200 0-1.700 1.300-3 3-3.200C4.300 2.800 6.400 1 9 1c2.400 0 4.300 1.500 5 3.500 1.900.200 3.300 1.700 3.300 3.500 0 2-1.600 3.500-3.600 3.500z" fill="#1a86dc"/><path d="M.600 8.300c0-1.700 1.300-3 3-3.200.800 0 2 .400 3.200 1.400L13 11.500H4c-2 0-3.400-1.400-3.400-3.200z" fill="#0f5fb2"/><circle cx="13.600" cy="11" r="4.200" fill="#f2f2f2" stroke="#1f2f3e" stroke-width=".800"/><path d="M11.600 10.400a2.200 2.200 0 0 1 4-.400M15.700 11.700a2.200 2.200 0 0 1-4 .300" fill="none" stroke="#345" stroke-width=".900"/></svg>
<svg style="left:1034px;top:691px" width="13" height="18" viewBox="0 0 13 18" ><rect x="3.600" y=".600" width="5.800" height="10.400" rx="2.900" fill="#fff"/><path d="M1 8.500c0 3 2.400 5.200 5.500 5.200s5.500-2.200 5.500-5.200M6.500 13.800v3M3.800 17h5.400" fill="none" stroke="#fff" stroke-width="1.200" stroke-linecap="round"/></svg>
<svg style="left:1067px;top:694px" width="14" height="14" viewBox="0 0 14 14" ><path d="M1 12.600A11.600 11.600 0 0 1 12.600 1M4.400 12.600a8.200 8.200 0 0 1 8.200-8.200M7.800 12.600a4.800 4.800 0 0 1 4.800-4.800" fill="none" stroke="#fff" stroke-width="1.200" stroke-linecap="round"/><circle cx="11.600" cy="11.600" r="1.500" fill="#fff"/></svg>
<svg style="left:1096px;top:693.5px" width="17" height="13" viewBox="0 0 17 13" fill="none" stroke="#fff" stroke-width="1.200" stroke-linecap="round" stroke-linejoin="round"><path d="M.800 4.400h2.800L7 1.200v10.600L3.600 8.600H.800z"/><path d="M9.400 4.200a3.200 3.200 0 0 1 0 4.600M11.600 2.400a6 6 0 0 1 0 8.200M13.800 .800a8.600 8.600 0 0 1 0 11.400"/></svg>
<svg style="left:1132.5px;top:691px" width="17" height="18" viewBox="0 0 17 18" fill="none" stroke="#fff" stroke-width="1.200" stroke-linecap="round" stroke-linejoin="round"><path d="M11.600 1.200c1-1 2.600-.600 3 .600.300.900-.100 1.700-.800 2.400L6.400 13l-2.800.800.600-3z"/><path d="M6.600 8.200c-2.400-.400-5 .800-5.400 3.200-.400 2.600 1.800 4.600 4.400 4.200 2-.300 3-1.800 2.800-3.400"/><path d="M10.600 8.600l5.200-1"/></svg>
<div class="t" style="left:1173.00px;top:685.85px;font-size:11.4px;color:#fff;transform:scaleX(0.9775);transform-origin:0 0;">2:48 PM</div>
<div class="t" style="left:1165.00px;top:704.85px;font-size:11.4px;color:#fff;transform:scaleX(1.0165);transform-origin:0 0;">10/24/2022</div>
<svg style="left:1239px;top:691.5px" width="17" height="17" viewBox="0 0 17 17" fill="none" stroke="#fff" stroke-width="1.200" stroke-linecap="round" stroke-linejoin="round"><path d="M.800 .800h15v11.400h-5.200L8.300 14.800 6 12.200H.800z"/></svg>
<div class="abs" style="left:1275px;top:680px;width:1px;height:40px;background:#5a6874"></div>
</div>
</body>
</html>
